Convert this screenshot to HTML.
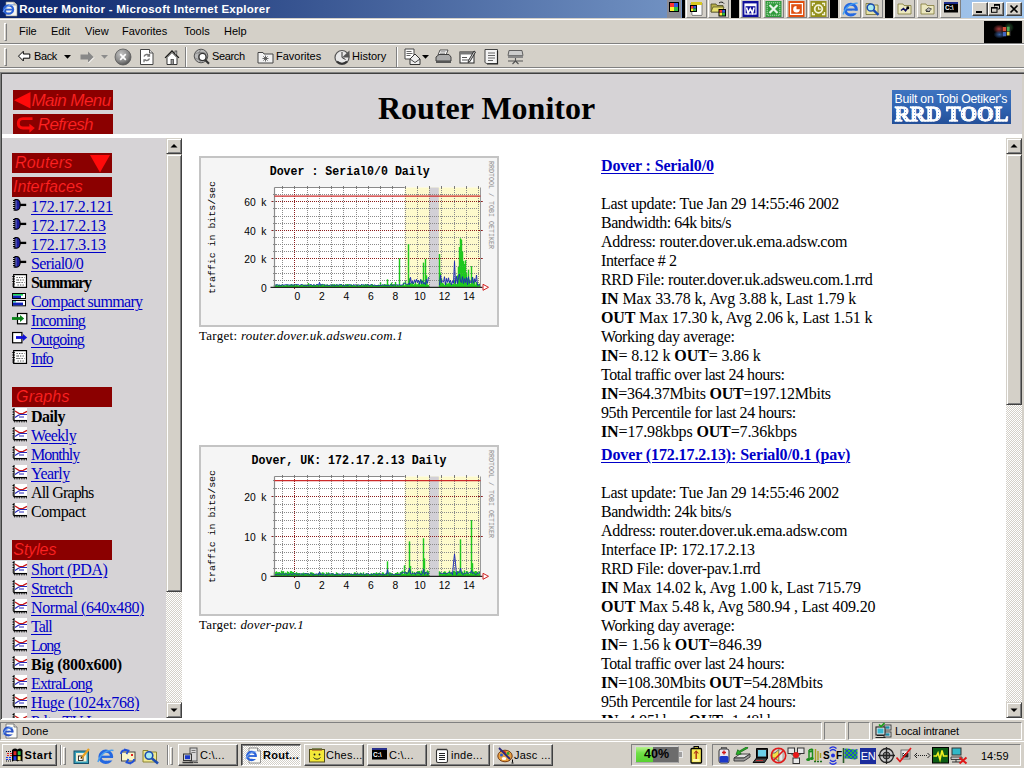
<!DOCTYPE html>
<html>
<head>
<meta charset="utf-8">
<title>Router Monitor</title>
<style>
*{box-sizing:border-box;margin:0;padding:0}
html,body{width:1024px;height:768px;overflow:hidden;background:#d4d0c8}
body{position:relative;font-family:"Liberation Sans",sans-serif;font-size:11px;color:#000}
.abs{position:absolute}
#title{left:0;top:0;width:1024px;height:19px;background:linear-gradient(90deg,#0a246a 0%,#a6caf0 100%)}
#title .t{left:20px;top:2.500px;color:#fff;font-weight:bold;font-size:11.5px;white-space:nowrap;letter-spacing:0px}
.ui{font-family:"Liberation Sans",sans-serif;font-size:11px;white-space:nowrap}
#menubar{left:0;top:19px;width:1024px;height:25px;background:#d4d0c8;border-top:1px solid #fff}
#toolbar{left:0;top:44px;width:1024px;height:26px;background:#d4d0c8;border-top:1px solid #fff}
.hline{height:1px;left:0;width:1024px}
#topframe{left:2px;top:74px;width:1020px;height:60px;background:#d6d3d6}
#leftframe{left:2px;top:138px;width:164px;height:580px;background:#d6d3d6;overflow:hidden}
#rightframe{left:184px;top:138px;width:821px;height:580px;background:#fff;overflow:hidden}
.serif{font-family:"Liberation Serif",serif}
.rb{background:#8b0000;color:#ff2222;-webkit-text-stroke:0.120px #8b0000;font-family:"Liberation Sans",sans-serif;font-style:italic;font-size:17px;white-space:nowrap;overflow:hidden}
a{color:#0000c8;text-decoration:underline;text-underline-offset:1.600px;text-decoration-thickness:1px}
#status{left:0;top:720px;width:1024px;height:22px;background:#d4d0c8}
#taskbar{left:0;top:742px;width:1024px;height:26px;background:#d4d0c8;border-top:1px solid #d4d0c8}

.osq i{position:absolute;width:4px;height:4px;display:block}
.ob{top:0;width:21px;height:18px;background:#d4d0c8;border-left:1px solid #fff;border-right:1px solid #808080;border-bottom:1px solid #808080;padding:1px 0 0 1px}
.ob svg{display:block}
.wb{top:2px;width:16px;height:14px;background:#d4d0c8;border:1px solid;border-color:#fff #404040 #404040 #fff;box-shadow:inset -1px -1px 0 #808080;padding:1px 0 0 1px}
.wb svg{display:block}
.grip{width:3px;border:1px solid;border-color:#fff #808080 #808080 #fff}
.vsep{width:2px;border-left:1px solid #808080;border-right:1px solid #fff}

.lr{left:10px;width:160px;height:19px;line-height:19px;font-size:16px;white-space:nowrap}
.sbtrack{background-color:#fff;background-image:linear-gradient(45deg,#d4d0c8 25%,transparent 25%,transparent 75%,#d4d0c8 75%),linear-gradient(45deg,#d4d0c8 25%,transparent 25%,transparent 75%,#d4d0c8 75%);background-size:2px 2px;background-position:0 0,1px 1px}
.sbbtn{background:#d4d0c8;border:1px solid;border-color:#d4d0c8 #404040 #404040 #d4d0c8;box-shadow:inset 1px 1px 0 #fff,inset -1px -1px 0 #808080;padding:1px}
.sbbtn svg{display:block}

.tl{left:417px;height:19px;line-height:19px;font-size:16px;white-space:nowrap}
.cap{left:15px;font-size:13px;line-height:15px;white-space:nowrap}

.sp{top:2px;height:18px;border:1px solid;border-color:#808080 #fff #fff #808080}
.tb{top:1px;height:22px;background:#d4d0c8;border:1px solid;border-color:#fff #404040 #404040 #fff;box-shadow:inset -1px -1px 0 #808080,inset 1px 1px 0 #d4d0c8}
.tbp{border-color:#404040 #fff #fff #404040;box-shadow:inset 1px 1px 0 #808080;background-color:#fff;background-image:linear-gradient(45deg,#d4d0c8 25%,transparent 25%,transparent 75%,#d4d0c8 75%),linear-gradient(45deg,#d4d0c8 25%,transparent 25%,transparent 75%,#d4d0c8 75%);background-size:2px 2px;background-position:0 0,1px 1px}
.tt{top:4px;letter-spacing:.250px}
.sunk{border:1px solid;border-color:#808080 #fff #fff #808080}
</style>
</head>
<body>
<!-- TITLE BAR -->
<div id="title" class="abs">
  <svg class="abs" style="left:2px;top:1px" width="16" height="16" viewBox="0 0 16 16"><path d="M4 1h8l3 3v11H4z" fill="#f4f4ee" stroke="#8a8a80" stroke-width=".6"/><path d="M12 1v3h3" fill="#d8d8d0" stroke="#8a8a80" stroke-width=".6"/><ellipse cx="6.5" cy="8.5" rx="4.6" ry="4.2" fill="none" stroke="#2a62d8" stroke-width="2.2"/><path d="M2.5 8.6h8" stroke="#2a62d8" stroke-width="1.8"/><path d="M1 11c3-6 8-8 11-7" stroke="#6fa0ee" stroke-width="1.1" fill="none"/></svg>
  <div class="abs t" id="ttl" style="/*fit*/letter-spacing:0.255px;margin-left:-0.70px;">Router Monitor - Microsoft Internet Explorer</div>
  <!-- office shortcut bar -->
  <div class="abs" style="left:667px;top:0;width:14px;height:18px;background:#8c8c94"></div>
  <div class="abs osq" style="left:669px;top:2px;background:#000;width:10px;height:10px"><i style="left:1px;top:1px;background:#f33"></i><i style="left:5px;top:1px;background:#35d"></i><i style="left:1px;top:5px;background:#fe3"></i><i style="left:5px;top:5px;background:#3b4"></i></div>
  <div class="abs" style="left:685px;top:0;width:276px;height:18px;background:#d4d0c8"></div>
  <div class="abs" style="left:682px;top:0;width:3px;height:18px;background:#000"></div>
  <div class="abs" style="left:731px;top:0;width:8px;height:18px;background:#000"></div>
  <div class="abs" style="left:830px;top:0;width:8px;height:18px;background:#000"></div>
  <div class="abs" style="left:885px;top:0;width:8px;height:18px;background:#000"></div>
  <div class="abs ob" style="left:686px"><svg width="17" height="16" viewBox="0 0 17 16"><path d="M3 2h11v12l-1 .8-1-.8-1 .8-1-.8-1 .8-1-.8-1 .8-1-.8-1 .8-1-.8z" fill="#fff" stroke="#555" stroke-width=".7"/><rect x="3" y="1" width="11" height="3" fill="#d8c820"/><rect x="2" y="4" width="7" height="7" fill="#000"/><rect x="3" y="5" width="2.5" height="2.5" fill="#f33"/><rect x="5.5" y="5" width="2.5" height="2.5" fill="#35d"/><rect x="3" y="7.5" width="2.5" height="2.5" fill="#fe3"/><rect x="5.5" y="7.5" width="2.5" height="2.5" fill="#3b4"/></svg></div>
  <div class="abs ob" style="left:708px"><svg width="17" height="16" viewBox="0 0 17 16"><path d="M1 3h5l1 1.5h6V11H1z" fill="#b8b048" stroke="#4a4820" stroke-width=".8"/><path d="M1 11l2-5h11l-2 5z" fill="#e8e070" stroke="#4a4820" stroke-width=".7"/><path d="M9 2c2-1.5 4-1 5 .6" stroke="#000" fill="none" stroke-width=".9"/><rect x="8.5" y="8" width="7.5" height="7.5" fill="#000"/><rect x="9.5" y="9" width="2.7" height="2.7" fill="#f33"/><rect x="12.3" y="9" width="2.7" height="2.7" fill="#35d"/><rect x="9.5" y="11.8" width="2.7" height="2.7" fill="#fe3"/><rect x="12.3" y="11.8" width="2.7" height="2.7" fill="#3b4"/></svg></div>
  <div class="abs ob" style="left:740px"><svg width="17" height="16" viewBox="0 0 17 16"><rect x="0.5" y="0" width="16" height="16" fill="#10109c"/><rect x="3" y="3" width="11" height="10" fill="none" stroke="#fff" stroke-width="1.2"/><rect x="3" y="3" width="11" height="2.2" fill="#fff"/><path d="M4.5 6.5l1.6 5.5 2.2-4.2 2.2 4.2 1.6-5.5" stroke="#fff" stroke-width="1.6" fill="none"/></svg></div>
  <div class="abs ob" style="left:763px"><svg width="17" height="16" viewBox="0 0 17 16"><rect x="0.5" y="0" width="16" height="16" fill="#2f9a3a"/><rect x="2.2" y="1.8" width="12.6" height="12.4" fill="none" stroke="#d8ecd8" stroke-width="1" stroke-dasharray="1 1"/><path d="M4.5 4l8 8M12.5 4l-8 8" stroke="#e8f4e8" stroke-width="2.2"/></svg></div>
  <div class="abs ob" style="left:786px"><svg width="17" height="16" viewBox="0 0 17 16"><rect x="0.5" y="0" width="16" height="16" fill="#e05010"/><rect x="2.6" y="2.6" width="11.8" height="10.8" fill="none" stroke="#fff" stroke-width="1.2"/><circle cx="8.5" cy="8.3" r="3.3" fill="#fff"/><path d="M8.5 8.3V4.6A3.7 3.7 0 0 1 12.2 8.3z" fill="#e05010"/></svg></div>
  <div class="abs ob" style="left:808px"><svg width="17" height="16" viewBox="0 0 17 16"><rect x="0.5" y="0" width="16" height="16" fill="#94901c"/><circle cx="8.5" cy="8" r="3.8" fill="none" stroke="#f4f4d8" stroke-width="1.8"/><path d="M8.5 5.6V8.2h2.4" stroke="#f4f4d8" stroke-width="1.2" fill="none"/><path d="M2.5 5V2.5H5M12 2.5h2.5V5M14.5 11v2.5H12M5 13.5H2.5V11" stroke="#f4f4d8" stroke-width="1.3" fill="none"/></svg></div>
  <div class="abs ob" style="left:840px"><svg width="17" height="16" viewBox="0 0 17 16"><ellipse cx="8.8" cy="8.6" rx="5.6" ry="5.4" fill="none" stroke="#2468e0" stroke-width="3"/><path d="M4 8.6h10" stroke="#2468e0" stroke-width="2.2"/><rect x="10" y="9.8" width="6" height="2.4" fill="#d4d0c8"/><path d="M1.2 13.5C3 6 10 1.5 15.5 2.2" stroke="#48a0f0" stroke-width="1.4" fill="none"/></svg></div>
  <div class="abs ob" style="left:862px"><svg width="17" height="16" viewBox="0 0 17 16"><path d="M2 2.5h5l1 1.5h6v9.5H2z" fill="#e8e4a8" stroke="#706c30" stroke-width=".8"/><circle cx="6.8" cy="6.5" r="3.6" fill="#a8ecf0" stroke="#1c4cb0" stroke-width="1.5"/><path d="M9.5 9.2l5 4.6" stroke="#1c4cb0" stroke-width="2.4"/></svg></div>
  <div class="abs ob" style="left:894px"><svg width="17" height="16" viewBox="0 0 17 16"><path d="M2 3h5l1 1.5h7V13H2z" fill="#ece8c0" stroke="#807838" stroke-width=".8"/><path d="M5 9.5l2.5-2 2 2.2 3-3.6" stroke="#101060" stroke-width="1.6" fill="none"/><rect x="10.5" y="5.5" width="2.6" height="2.6" fill="#000"/></svg></div>
  <div class="abs ob" style="left:917px"><svg width="17" height="16" viewBox="0 0 17 16"><path d="M2 3h5l1 1.5h7V13H2z" fill="#ece8c0" stroke="#807838" stroke-width=".8"/><path d="M6.5 9.2l3-2.4 3 1.2-2.6 2.6z" fill="#bbb" stroke="#333" stroke-width=".8"/><path d="M7 10.5h4" stroke="#333" stroke-width="1"/></svg></div>
  <div class="abs ob" style="left:940px"><svg width="17" height="16" viewBox="0 0 17 16"><rect x="2" y="1" width="14" height="10.5" fill="#000"/><rect x="2" y="1" width="14" height="2" fill="#1c2c8c"/><text x="3" y="9" font-family="Liberation Sans" font-size="6.5" font-weight="bold" fill="#fff">C:\</text></svg></div>
  <!-- window buttons -->
  <div class="abs wb" style="left:972px"><svg width="12" height="10" viewBox="0 0 12 10"><rect x="2" y="7" width="6" height="2" fill="#000"/></svg></div>
  <div class="abs wb" style="left:988px"><svg width="12" height="10" viewBox="0 0 12 10"><path d="M4.5 2.5V0.5h5v4.5H7.5" fill="none" stroke="#000" stroke-width="1"/><path d="M4 1h6" stroke="#000" stroke-width="1.6"/><rect x="1.5" y="3.5" width="5.5" height="4.8" fill="none" stroke="#000" stroke-width="1"/><path d="M1 3.8h6.5" stroke="#000" stroke-width="1.6"/></svg></div>
  <div class="abs wb" style="left:1006px"><svg width="12" height="10" viewBox="0 0 12 10"><path d="M2.5 1.5l7 7M9.5 1.5l-7 7" stroke="#000" stroke-width="1.7"/></svg></div>
</div>
<div class="abs hline" style="top:18px;background:#d4d0c8"></div>
<!-- MENU BAR -->
<div id="menubar" class="abs">
  <div class="abs grip" style="left:4px;top:3px;height:18px"></div>
  <div class="abs ui" style="left:19px;top:5px">File</div>
  <div class="abs ui" style="left:51px;top:5px">Edit</div>
  <div class="abs ui" style="left:85px;top:5px">View</div>
  <div class="abs ui" style="left:122px;top:5px">Favorites</div>
  <div class="abs ui" style="left:184px;top:5px">Tools</div>
  <div class="abs ui" style="left:224px;top:5px">Help</div>
  <div class="abs" style="left:984px;top:1px;width:38px;height:22px;background:#000">
    <svg width="38" height="22" viewBox="0 0 38 22"><defs><radialGradient id="wgr"><stop offset="0" stop-color="#e05050" stop-opacity=".75"/><stop offset="1" stop-color="#e05050" stop-opacity="0"/></radialGradient><radialGradient id="wgb"><stop offset="0" stop-color="#4878c8" stop-opacity=".8"/><stop offset="1" stop-color="#4878c8" stop-opacity="0"/></radialGradient><radialGradient id="wgg"><stop offset="0" stop-color="#3c9c4c" stop-opacity=".6"/><stop offset="1" stop-color="#3c9c4c" stop-opacity="0"/></radialGradient></defs><ellipse cx="15" cy="8" rx="6" ry="4.5" fill="url(#wgr)"/><ellipse cx="15.5" cy="13.5" rx="6" ry="4" fill="url(#wgb)"/><ellipse cx="25" cy="6.5" rx="5" ry="5" fill="url(#wgg)"/><rect x="18.8" y="6" width="3.4" height="4.3" fill="#d8503c"/><rect x="23" y="5.8" width="2.800" height="4.3" fill="#48a858"/><rect x="18.8" y="11" width="3.4" height="4.3" fill="#4468c0"/><rect x="22.8" y="10.7" width="2.9" height="3.8" fill="#e0d048"/><path d="M26.3 5v10" stroke="#222" stroke-width="1"/></svg>
  </div>
</div>
<div class="abs hline" style="top:43px;background:#808080"></div>
<!-- TOOLBAR -->
<div id="toolbar" class="abs">
  <div class="abs grip" style="left:4px;top:3px;height:18px"></div>
  <svg class="abs" style="left:17px;top:4px" width="16" height="16" viewBox="0 0 16 16"><path d="M6.300 2.300L1.500 7.100l4.800 4.800V9.200h6.500V5H6.300z" fill="#fff" stroke="#000" stroke-width="1" stroke-linejoin="miter"/></svg>
  <div class="abs ui" style="left:34px;top:5px;letter-spacing:-.400px">Back</div>
  <svg class="abs" style="left:64px;top:10px" width="7" height="4" viewBox="0 0 7 4"><path d="M0 0h7L3.500 3.800z" fill="#000"/></svg>
  <svg class="abs" style="left:79px;top:4px" width="16" height="16" viewBox="0 0 16 16"><path d="M9 2.500L14.500 8 9 13.500V10.500H1.500V5.500H9z" fill="#888" stroke="none"/><path d="M9.500 14L15 8.500" stroke="#fff" stroke-width="1"/></svg>
  <svg class="abs" style="left:101px;top:10px" width="7" height="4" viewBox="0 0 7 4"><path d="M0 0h7L3.500 3.800z" fill="#8c8c8c"/></svg>
  <svg class="abs" style="left:114px;top:3px" width="18" height="18" viewBox="0 0 18 18"><defs><radialGradient id="sg" cx=".38" cy=".32" r=".75"><stop offset="0" stop-color="#c4c4c4"/><stop offset=".6" stop-color="#8a8a8a"/><stop offset="1" stop-color="#484848"/></radialGradient></defs><circle cx="9" cy="9" r="8" fill="url(#sg)" stroke="#5a5a5a" stroke-width=".8"/><path d="M6.200 6.200l5.600 5.600M11.800 6.200l-5.600 5.600" stroke="#fff" stroke-width="1.700"/></svg>
  <svg class="abs" style="left:139px;top:3px" width="16" height="18" viewBox="0 0 16 18"><path d="M1.500 1.500h9l3.500 3.500v11.500h-12.500z" fill="#fff" stroke="#444" stroke-width="1"/><path d="M10.500 1.500v3.500h3.500" fill="#ddd" stroke="#444" stroke-width=".9"/><path d="M5 8.500c1-2.500 4-2.500 5-1M10.500 5.800v2.200h-2.200" stroke="#777" stroke-width="1.300" fill="none"/><path d="M10.500 10.500c-1 2.500-4 2.500-5 1M5 14.200v-2.200h2.200" stroke="#777" stroke-width="1.300" fill="none"/></svg>
  <svg class="abs" style="left:164px;top:3px" width="16" height="18" viewBox="0 0 16 18"><path d="M3 9.500v7h10v-7L8 4.500z" fill="#fff" stroke="#222" stroke-width=".9"/><path d="M1 9.800L8 2.800l7 7" fill="none" stroke="#111" stroke-width="1.100"/><rect x="7" y="11.500" width="2.600" height="5" fill="#999" stroke="#333" stroke-width=".7"/><rect x="11" y="3" width="1.800" height="3.500" fill="#ddd" stroke="#333" stroke-width=".7"/></svg>
  <div class="abs vsep" style="left:185px;top:2px;height:20px"></div>
  <svg class="abs" style="left:193px;top:3px" width="18" height="18" viewBox="0 0 18 18"><circle cx="8" cy="8" r="6.800" fill="#b8b8b8" stroke="#555" stroke-width="1"/><path d="M2 6c3-2 9-2 12 0M2 10c3 2 9 2 12 0M8 1.500c-3 3-3 10 0 13" stroke="#777" stroke-width=".8" fill="none"/><circle cx="9.500" cy="9" r="3.600" fill="#fff" stroke="#333" stroke-width="1.400"/><path d="M12 11.800l4 4" stroke="#333" stroke-width="2.200"/></svg>
  <div class="abs ui" style="left:212px;top:5px;letter-spacing:-.350px">Search</div>
  <svg class="abs" style="left:257px;top:5px" width="17" height="14" viewBox="0 0 17 14"><path d="M1 2.500h5l1 1.500h9v9h-15z" fill="#f2f2f2" stroke="#444" stroke-width="1"/><path d="M8.500 5.500v6M5.500 8.500h6M6.400 6.400l4.200 4.200M10.600 6.400l-4.200 4.200" stroke="#555" stroke-width=".9"/></svg>
  <div class="abs ui" style="left:276px;top:5px">Favorites</div>
  <svg class="abs" style="left:334px;top:3px" width="17" height="18" viewBox="0 0 17 18"><circle cx="8" cy="9.500" r="7" fill="#e8e8e8" stroke="#555" stroke-width="1.200"/><path d="M8 9.500V4M8 9.500l3.500 2" stroke="#333" stroke-width="1"/><path d="M8 9.500L15.500 2.500v7z" fill="#555"/><path d="M3 13.500a7 7 0 0 0 10 0" stroke="#333" stroke-width="1.800" fill="none"/></svg>
  <div class="abs ui" style="left:352px;top:5px">History</div>
  <div class="abs vsep" style="left:396px;top:2px;height:20px"></div>
  <svg class="abs" style="left:404px;top:3px" width="17" height="18" viewBox="0 0 17 18"><path d="M1 1h9v10H1z" fill="#fff" stroke="#444" stroke-width="1"/><path d="M2.500 3.500h5M2.500 5.500h6M2.500 7.500h4" stroke="#666" stroke-width="1"/><path d="M6 11l5-5 5 5v5.500H6z" fill="#eee" stroke="#333" stroke-width="1"/><path d="M6 11l5 3.500 5-3.500" fill="none" stroke="#333" stroke-width=".9"/></svg>
  <svg class="abs" style="left:422px;top:10px" width="7" height="4" viewBox="0 0 7 4"><path d="M0 0h7L3.500 3.800z" fill="#000"/></svg>
  <svg class="abs" style="left:435px;top:4px" width="17" height="16" viewBox="0 0 17 16"><path d="M5 1h8l-2 5H3z" fill="#fff" stroke="#444" stroke-width=".9"/><path d="M1 8l3-2.500h10l2 2.500v4H1z" fill="#aaa" stroke="#333" stroke-width=".9"/><path d="M1 12h15v2H1z" fill="#555"/><path d="M5.500 2.800h5M5 4.300h5" stroke="#777" stroke-width=".8"/></svg>
  <svg class="abs" style="left:459px;top:4px" width="17" height="16" viewBox="0 0 17 16"><rect x="1" y="3" width="14" height="11" fill="#fff" stroke="#333" stroke-width="1.100"/><rect x="1" y="3" width="14" height="2.500" fill="#777"/><path d="M3 8.500h5M3 11h7" stroke="#555" stroke-width="1.100"/><path d="M9.500 11.500l5.500-9.500 1.500 1-5.500 9.500-2 1z" fill="#ccc" stroke="#222" stroke-width=".9"/></svg>
  <svg class="abs" style="left:483px;top:3px" width="16" height="18" viewBox="0 0 16 18"><path d="M2 1.500h12.500v14H4.500c-2 0-3-1-2.500-2.500z" fill="#f4f4f4" stroke="#444" stroke-width="1"/><path d="M5 5h7M5 7.500h7M5 10h7M5 12.500h5" stroke="#666" stroke-width="1.100"/><path d="M14.500 3v13H4" stroke="#222" stroke-width="1.200" fill="none"/></svg>
  <svg class="abs" style="left:507px;top:4px" width="17" height="16" viewBox="0 0 17 16"><path d="M2 1.500h13l1 5H1z" fill="#ccc" stroke="#555" stroke-width=".9"/><path d="M1 6.500h15v2.500H1z" fill="#888"/><path d="M8.500 9v3M1 12h15M8.500 12l-3 3M8.500 12l3 3" stroke="#555" stroke-width="1.100" fill="none"/></svg>
</div>
<div class="abs hline" style="top:67px;background:#808080"></div>
<div class="abs hline" style="top:68px;background:#fff"></div>
<div class="abs hline" style="top:72px;background:#808080"></div>
<div class="abs hline" style="top:73px;background:#404040"></div>
<div class="abs" style="left:0px;top:72px;width:1px;height:648px;background:#808080"></div>
<div class="abs" style="left:1px;top:73px;width:1px;height:646px;background:#404040"></div>
<div class="abs" style="left:2px;top:74px;width:1020px;height:645px;background:#fff"></div>
<!-- FRAMES -->
<svg width="0" height="0" style="position:absolute"><defs>
<g id="plug"><path d="M3 1.500h1.300c2.700 0 3.900 2.300 3.900 5.400s-1.200 5.400-3.900 5.400H3z" fill="#1c1c9c" stroke="#000" stroke-width="1.100"/><path d="M4 2.500v8.800" stroke="#8c94d0" stroke-width=".8"/><path d="M8 6.900h6.200" stroke="#000" stroke-width="2.300"/><path d="M1 2.500h2M1 4.500h2M1 6.500h2M1 8.500h2M1 10.500h2M1.500 12h1.500" stroke="#000" stroke-width="1"/></g>
<g id="note"><rect x="1.700" y="0.600" width="12.800" height="12.800" fill="#fff" stroke="#000" stroke-width="1.200"/><path d="M0.300 2.500h2.500M0.300 5h2.500M0.300 7.500h2.500M0.300 10h2.500M0.300 12h2" stroke="#000" stroke-width="1"/><path d="M4.500 3.500h8M5.500 6h7M4.500 8.500h8M5.500 11h7" stroke="#555" stroke-width="1" stroke-dasharray="1.300 1.200"/><path d="M4 6h3M4 8.500h4" stroke="#777" stroke-width=".9"/></g>
<g id="bars"><rect x="0.500" y="0.500" width="13" height="5" fill="#fff" stroke="#000" stroke-width="1"/><rect x="1" y="1" width="10" height="1.600" fill="#18d858"/><rect x="1" y="2.600" width="8" height="2.400" fill="#1020b8"/><rect x="0.500" y="7.500" width="13" height="5.300" fill="#fff" stroke="#000" stroke-width="1"/><rect x="1" y="8" width="3" height="1.600" fill="#48c8a0"/><rect x="1" y="9.600" width="10" height="2.700" fill="#1020b8"/></g>
<g id="inc"><rect x="5.500" y="1.500" width="9.300" height="10.300" fill="#fff" stroke="#000" stroke-width="1.200"/><path d="M0 6.500h8.500" stroke="#088018" stroke-width="2.800"/><path d="M8 3l4.200 3.500L8 10z" fill="#088018"/></g>
<g id="outg"><rect x="0.600" y="1.500" width="9.300" height="10.300" fill="#fff" stroke="#000" stroke-width="1.200"/><path d="M4 6.500h7.500" stroke="#1010d8" stroke-width="2.800"/><path d="M11 3l4.200 3.500L11 10z" fill="#1010d8"/></g>
<g id="gr"><rect x="1" y="0" width="14" height="13" fill="#fff"/><path d="M2 0v13" stroke="#000" stroke-width="1.200"/><path d="M1.500 12.600h13.500" stroke="#000" stroke-width="1.300"/><path d="M2 13.800h13" stroke="#000" stroke-width="1" stroke-dasharray="1.200 1.200"/><path d="M0.500 1.500h1.500M0.500 4h1.500M0.500 6.500h1.500M0.500 9h1.500M0.500 11h1.500" stroke="#000" stroke-width="1"/><path d="M3 3l4.200 2.600 4-.3L15 3.400" stroke="#c81818" stroke-width="1.300" fill="none"/><path d="M3 9.500l3-2 2.200-1H15" stroke="#2828b8" stroke-width="1.200" fill="none"/><path d="M7 9h5" stroke="#2828b8" stroke-width="1" fill="none"/></g>
</defs></svg>
<div id="topframe" class="abs">
  <div class="abs rb" style="left:11px;top:16px;width:100px;height:20px"><svg class="abs" style="left:1px;top:1.500px" width="17" height="17" viewBox="0 0 17 17"><path d="M16.500 0v16.500L0 8.200z" fill="#ff0a0a"/></svg><span id="mm" class="abs" style="left:19px;top:0.700px;line-height:20px;/*fit*/letter-spacing:-0.550px;margin-left:-0.50px;">Main Menu</span></div>
  <div class="abs rb" style="left:11px;top:40px;width:100px;height:20px"><svg class="abs" style="left:3px;top:2px" width="20" height="18" viewBox="0 0 20 18"><path d="M16.500 2.600H7C3.500 2.600 2.300 4.600 2.300 7.300S3.500 12 7 12H14" fill="none" stroke="#fa0c0c" stroke-width="2.900"/><path d="M13.400 7.700l5.400 4.400-5.400 4.600z" fill="#fa0c0c"/></svg><span id="rf" class="abs" style="left:26px;top:0.700px;line-height:20px;/*fit*/letter-spacing:-0.633px;margin-left:-1.20px;">Refresh</span></div>
  <div class="abs serif" style="left:376px;top:13.500px;font-size:32px;font-weight:bold;white-space:nowrap;line-height:40px;/*fit*/letter-spacing:0.000px;margin-left:0.00px;" id="h1t">Router Monitor</div>
  <div class="abs" style="left:890px;top:16px;width:119px;height:34px;background:linear-gradient(180deg,#3f74c0 0%,#2e62b0 55%,#244f98 100%);overflow:hidden">
    <div class="abs" style="left:2.500px;top:2.200px;color:#fff;font-size:12.300px;letter-spacing:-0.250px;white-space:nowrap;line-height:15px" id="rrd1">Built on Tobi Oetiker's</div>
    <div class="abs serif" style="left:2.500px;top:12px;color:transparent;background:radial-gradient(circle at 1.500px 1.500px,#6c94d0 0.550px,#fff 0.800px) 0 0/3px 3px;-webkit-background-clip:text;background-clip:text;-webkit-text-stroke:0.800px #fff;font-size:21.600px;font-weight:bold;white-space:nowrap;line-height:24px" id="rrd2">RRD TOOL</div>
  </div>
</div>
<div id="leftframe" class="abs serif">
<!--LF-->
<div class="abs rb" style="left:10px;top:15px;width:100px;height:20px"><span id="h0" class="abs" style="left:3px;top:0px;font-size:16px;line-height:20px;letter-spacing:0.200px;">Routers</span><svg class="abs" style="left:78px;top:2px" width="20" height="18" viewBox="0 0 20 18"><path d="M0 0h20L10 17.500z" fill="#ff0a0a"/></svg></div>
<div class="abs rb" style="left:10px;top:39px;width:100px;height:20px"><span id="h1" class="abs" style="left:1px;top:0px;font-size:16px;line-height:20px;letter-spacing:-0.056px;">Interfaces</span></div>
<div class="abs lr" style="top:59px"><svg class="abs" style="left:0;top:1px" width="16" height="16" viewBox="0 0 16 16"><use href="#plug"/></svg><span id="l0" class="abs" style="left:19px;top:0;letter-spacing:-0.182px;"><a>172.17.2.121</a></span></div>
<div class="abs lr" style="top:78px"><svg class="abs" style="left:0;top:1px" width="16" height="16" viewBox="0 0 16 16"><use href="#plug"/></svg><span id="l1" class="abs" style="left:19px;top:0;letter-spacing:-0.100px;"><a>172.17.2.13</a></span></div>
<div class="abs lr" style="top:97px"><svg class="abs" style="left:0;top:1px" width="16" height="16" viewBox="0 0 16 16"><use href="#plug"/></svg><span id="l2" class="abs" style="left:19px;top:0;letter-spacing:-0.100px;"><a>172.17.3.13</a></span></div>
<div class="abs lr" style="top:116px"><svg class="abs" style="left:0;top:1px" width="16" height="16" viewBox="0 0 16 16"><use href="#plug"/></svg><span id="l3" class="abs" style="left:19px;top:0;letter-spacing:-0.625px;"><a>Serial0/0</a></span></div>
<div class="abs lr" style="top:135px"><svg class="abs" style="left:0;top:1px" width="16" height="16" viewBox="0 0 16 16"><use href="#note"/></svg><span id="l4" class="abs" style="left:19px;top:0;letter-spacing:-1.083px;"><b>Summary</b></span></div>
<div class="abs lr" style="top:154px"><svg class="abs" style="left:0;top:1px" width="16" height="16" viewBox="0 0 16 16"><use href="#bars"/></svg><span id="l5" class="abs" style="left:19px;top:0;letter-spacing:-0.657px;"><a>Compact summary</a></span></div>
<div class="abs lr" style="top:173px"><svg class="abs" style="left:0;top:1px" width="16" height="16" viewBox="0 0 16 16"><use href="#inc"/></svg><span id="l6" class="abs" style="left:19px;top:0;letter-spacing:-0.943px;"><a>Incoming</a></span></div>
<div class="abs lr" style="top:192px"><svg class="abs" style="left:0;top:1px" width="16" height="16" viewBox="0 0 16 16"><use href="#outg"/></svg><span id="l7" class="abs" style="left:19px;top:0;letter-spacing:-0.943px;"><a>Outgoing</a></span></div>
<div class="abs lr" style="top:211px"><svg class="abs" style="left:0;top:1px" width="16" height="16" viewBox="0 0 16 16"><use href="#note"/></svg><span id="l8" class="abs" style="left:19px;top:0;letter-spacing:-1.333px;"><a>Info</a></span></div>
<div class="abs rb" style="left:10px;top:249px;width:100px;height:20px"><span id="h2" class="abs" style="left:4px;top:0px;font-size:16px;line-height:20px;letter-spacing:0.200px;">Graphs</span></div>
<div class="abs lr" style="top:269px"><svg class="abs" style="left:0;top:1px" width="16" height="16" viewBox="0 0 16 16"><use href="#gr"/></svg><span id="l9" class="abs" style="left:19px;top:0;letter-spacing:-0.475px;"><b>Daily</b></span></div>
<div class="abs lr" style="top:288px"><svg class="abs" style="left:0;top:1px" width="16" height="16" viewBox="0 0 16 16"><use href="#gr"/></svg><span id="l10" class="abs" style="left:19px;top:0;letter-spacing:-0.560px;"><a>Weekly</a></span></div>
<div class="abs lr" style="top:307px"><svg class="abs" style="left:0;top:1px" width="16" height="16" viewBox="0 0 16 16"><use href="#gr"/></svg><span id="l11" class="abs" style="left:19px;top:0;letter-spacing:-0.967px;"><a>Monthly</a></span></div>
<div class="abs lr" style="top:326px"><svg class="abs" style="left:0;top:1px" width="16" height="16" viewBox="0 0 16 16"><use href="#gr"/></svg><span id="l12" class="abs" style="left:19px;top:0;letter-spacing:-0.560px;"><a>Yearly</a></span></div>
<div class="abs lr" style="top:345px"><svg class="abs" style="left:0;top:1px" width="16" height="16" viewBox="0 0 16 16"><use href="#gr"/></svg><span id="l13" class="abs" style="left:19px;top:0;letter-spacing:-0.822px;">All Graphs</span></div>
<div class="abs lr" style="top:364px"><svg class="abs" style="left:0;top:1px" width="16" height="16" viewBox="0 0 16 16"><use href="#gr"/></svg><span id="l14" class="abs" style="left:19px;top:0;letter-spacing:-0.450px;">Compact</span></div>
<div class="abs rb" style="left:10px;top:402px;width:100px;height:20px"><span id="h3" class="abs" style="left:2px;top:0px;font-size:16px;line-height:20px;letter-spacing:-0.100px;margin-left:-0.70px;">Styles</span></div>
<div class="abs lr" style="top:422px"><svg class="abs" style="left:0;top:1px" width="16" height="16" viewBox="0 0 16 16"><use href="#gr"/></svg><span id="l15" class="abs" style="left:19px;top:0;letter-spacing:-0.450px;"><a>Short (PDA)</a></span></div>
<div class="abs lr" style="top:441px"><svg class="abs" style="left:0;top:1px" width="16" height="16" viewBox="0 0 16 16"><use href="#gr"/></svg><span id="l16" class="abs" style="left:19px;top:0;letter-spacing:-0.568px;"><a>Stretch</a></span></div>
<div class="abs lr" style="top:460px"><svg class="abs" style="left:0;top:1px" width="16" height="16" viewBox="0 0 16 16"><use href="#gr"/></svg><span id="l17" class="abs" style="left:19px;top:0;letter-spacing:-0.407px;"><a>Normal (640x480)</a></span></div>
<div class="abs lr" style="top:479px"><svg class="abs" style="left:0;top:1px" width="16" height="16" viewBox="0 0 16 16"><use href="#gr"/></svg><span id="l18" class="abs" style="left:19px;top:0;letter-spacing:-1.000px;"><a>Tall</a></span></div>
<div class="abs lr" style="top:498px"><svg class="abs" style="left:0;top:1px" width="16" height="16" viewBox="0 0 16 16"><use href="#gr"/></svg><span id="l19" class="abs" style="left:19px;top:0;letter-spacing:-1.267px;"><a>Long</a></span></div>
<div class="abs lr" style="top:517px"><svg class="abs" style="left:0;top:1px" width="16" height="16" viewBox="0 0 16 16"><use href="#gr"/></svg><span id="l20" class="abs" style="left:19px;top:0;letter-spacing:-0.225px;"><b>Big (800x600)</b></span></div>
<div class="abs lr" style="top:536px"><svg class="abs" style="left:0;top:1px" width="16" height="16" viewBox="0 0 16 16"><use href="#gr"/></svg><span id="l21" class="abs" style="left:19px;top:0;letter-spacing:-0.838px;"><a>ExtraLong</a></span></div>
<div class="abs lr" style="top:555px"><svg class="abs" style="left:0;top:1px" width="16" height="16" viewBox="0 0 16 16"><use href="#gr"/></svg><span id="l22" class="abs" style="left:19px;top:0;letter-spacing:-0.342px;"><a>Huge (1024x768)</a></span></div>
<div class="abs lr" style="top:574px"><svg class="abs" style="left:0;top:1px" width="16" height="16" viewBox="0 0 16 16"><use href="#gr"/></svg><span id="l23" class="abs" style="left:19px;top:0;letter-spacing:-0.342px;"><a>Pdtv TV L</a></span></div>
<!--/LF-->
</div>
<!-- left scrollbar -->
<div class="abs sbtrack" style="left:166px;top:138px;width:16px;height:580px"></div>
<div class="abs sbbtn" style="left:166px;top:138px;width:16px;height:16px"><svg width="12" height="12" viewBox="0 0 12 12"><path d="M2.500 7.500h7L6 4z" fill="#000"/></svg></div>
<div class="abs sbbtn" style="left:166px;top:154px;width:16px;height:438px"></div>
<div class="abs sbbtn" style="left:166px;top:702px;width:16px;height:16px"><svg width="12" height="12" viewBox="0 0 12 12"><path d="M2.500 4.500h7L6 8z" fill="#000"/></svg></div>
<div id="rightframe" class="abs serif">
<!--RF-->
<div class="abs" style="left:15px;top:18px;width:300px;height:171px"><svg width="300" height="171" viewBox="0 0 300 171" style="display:block">
<rect x="0" y="0" width="300" height="171" fill="#c4c4c4"/>
<rect x="2" y="2" width="296" height="167" fill="#f5f5f5"/>
<rect x="75.5" y="31.5" width="206.0" height="99.5" fill="#fff"/>
<rect x="205.7" y="31.5" width="75.8" height="99.5" fill="#fdfacc"/>
<rect x="230.2" y="31.5" width="9.6" height="99.5" fill="#d2d0d6"/>
<path d="M75.5 131.0V129.1M76.5 131.0V129.4M77.5 131.0V128.6M78.5 131.0V129.5M79.5 131.0V128.8M80.5 131.0V129.0M81.5 131.0V129.5M82.5 131.0V128.8M83.5 131.0V129.5M84.5 131.0V128.9M85.5 131.0V129.5M86.5 131.0V129.4M87.5 131.0V129.0M88.5 131.0V128.4M89.5 131.0V129.4M90.5 131.0V129.3M91.5 131.0V128.7M92.5 131.0V128.2M93.5 131.0V128.7M94.5 131.0V129.0M95.5 131.0V128.2M96.5 131.0V129.5M97.5 131.0V128.3M98.5 131.0V129.2M99.5 131.0V129.4M100.5 131.0V129.4M101.5 131.0V129.1M102.5 131.0V128.4M103.5 131.0V129.3M104.5 131.0V128.7M105.5 131.0V128.7M106.5 131.0V129.0M107.5 131.0V128.8M108.5 131.0V129.5M109.5 131.0V127.3M110.5 131.0V129.3M111.5 131.0V128.6M112.5 131.0V129.0M113.5 131.0V129.1M114.5 131.0V128.7M115.5 131.0V128.9M116.5 131.0V129.1M117.5 131.0V128.4M118.5 131.0V128.6M119.5 131.0V129.2M120.5 131.0V128.7M121.5 131.0V128.8M122.5 131.0V128.3M123.5 131.0V128.5M124.5 131.0V129.2M125.5 131.0V128.2M126.5 131.0V129.4M127.5 131.0V129.0M128.5 131.0V128.5M129.5 131.0V129.4M130.5 131.0V128.9M131.5 131.0V129.5M132.5 131.0V128.6M133.5 131.0V128.5M134.5 131.0V128.8M135.5 131.0V128.3M136.5 131.0V129.1M137.5 131.0V128.6M138.5 131.0V128.7M139.5 131.0V128.7M140.5 131.0V128.9M141.5 131.0V128.4M142.5 131.0V128.2M143.5 131.0V128.9M144.5 131.0V128.6M145.5 131.0V129.5M146.5 131.0V128.6M147.5 131.0V128.6M148.5 131.0V128.1M149.5 131.0V128.4M150.5 131.0V129.2M151.5 131.0V129.0M152.5 131.0V128.6M153.5 131.0V129.5M154.5 131.0V128.9M155.5 131.0V129.3M156.5 131.0V129.4M157.5 131.0V129.5M158.5 131.0V128.5M159.5 131.0V129.4M160.5 131.0V129.2M161.5 131.0V129.0M162.5 131.0V128.3M163.5 131.0V129.5M164.5 131.0V128.9M165.5 131.0V128.8M166.5 131.0V128.3M167.5 131.0V128.4M168.5 131.0V128.3M169.5 131.0V129.2M170.5 131.0V129.0M171.5 131.0V129.1M172.5 131.0V128.3M173.5 131.0V128.2M174.5 131.0V129.4M175.5 131.0V129.3M176.5 131.0V129.2M177.5 131.0V129.2M178.5 131.0V128.9M179.5 131.0V128.7M180.5 131.0V129.2M181.5 131.0V126.4M182.5 131.0V129.0M183.5 131.0V129.0M184.5 131.0V128.8M185.5 131.0V128.2M186.5 131.0V128.6M187.5 131.0V128.8M188.5 131.0V123.6M189.5 131.0V128.6M190.5 131.0V129.5M191.5 131.0V128.3M192.5 131.0V126.7M193.5 131.0V128.3M194.5 131.0V128.4M195.5 131.0V129.0M196.5 131.0V126.0M197.5 131.0V129.4M198.5 131.0V128.7M199.5 131.0V129.5M200.5 131.0V102.4M201.5 131.0V129.3M202.5 131.0V129.3M203.5 131.0V129.1M204.5 131.0V126.7M205.5 131.0V129.4M206.5 131.0V125.3M207.5 131.0V128.4M208.5 131.0V128.5M209.5 131.0V88.1M210.5 131.0V122.4M211.5 131.0V127.1M212.5 131.0V128.3M213.5 131.0V126.0M214.5 131.0V128.7M215.5 131.0V128.2M216.5 131.0V125.3M217.5 131.0V128.6M218.5 131.0V128.8M219.5 131.0V127.6M220.5 131.0V125.3M221.5 131.0V128.7M222.5 131.0V123.8M223.5 131.0V127.8M224.5 131.0V106.7M225.5 131.0V127.1M226.5 131.0V103.1M227.5 131.0V119.6M228.5 131.0V128.6M229.5 131.0V129.0M240.5 131.0V98.1M241.5 131.0V116.7M242.5 131.0V122.4M243.5 131.0V127.0M244.5 131.0V127.7M245.5 131.0V129.0M246.5 131.0V126.0M247.5 131.0V127.5M248.5 131.0V127.8M249.5 131.0V127.6M250.5 131.0V125.3M251.5 131.0V127.3M252.5 131.0V127.9M253.5 131.0V128.3M254.5 131.0V128.1M255.5 131.0V123.8M256.5 131.0V127.8M257.5 131.0V128.3M258.5 131.0V119.6M259.5 131.0V111.0M260.5 131.0V91.0M261.5 131.0V82.4M262.5 131.0V83.8M263.5 131.0V95.2M264.5 131.0V105.3M265.5 131.0V108.1M266.5 131.0V104.5M267.5 131.0V116.7M268.5 131.0V122.4M269.5 131.0V113.8M270.5 131.0V123.8M271.5 131.0V128.2M272.5 131.0V110.3M273.5 131.0V121.0M274.5 131.0V127.8M275.5 131.0V123.8M276.5 131.0V128.8M277.5 131.0V126.0M278.5 131.0V128.5M279.5 131.0V128.7M280.5 131.0V127.8" stroke="#1ec81e" stroke-width="1.25" fill="none"/>
<path d="M77.0 124.5H281.5M77.0 117.5H281.5M77.0 110.5H281.5M77.0 95.5H281.5M77.0 88.5H281.5M77.0 81.5H281.5M77.0 67.5H281.5M77.0 60.5H281.5M77.0 52.5H281.5M77.0 38.5H281.5" stroke="#8a8a8a" stroke-width="1" stroke-dasharray="1 1" fill="none"/>
<path d="M83.5 32.0V131.0M108.5 32.0V131.0M120.5 32.0V131.0M132.5 32.0V131.0M144.5 32.0V131.0M157.5 32.0V131.0M169.5 32.0V131.0M181.5 32.0V131.0M193.5 32.0V131.0M206.5 32.0V131.0M218.5 32.0V131.0M230.5 32.0V131.0M242.5 32.0V131.0M255.5 32.0V131.0M267.5 32.0V131.0M279.5 32.0V131.0" stroke="#8a8a8a" stroke-width="1" stroke-dasharray="1 1" fill="none"/>
<path d="M77.0 102.5H283.5M77.0 74.5H283.5M77.0 45.5H283.5" stroke="#8c1c1c" stroke-width="1" stroke-dasharray="1 1" fill="none"/>
<path d="M72.5 102.5h4M279.5 102.5h4M72.5 74.5h4M279.5 74.5h4M72.5 45.5h4M279.5 45.5h4" stroke="#8c1c1c" stroke-width="1" fill="none"/>
<path d="M95.5 30.0V134.0" stroke="#8c1c1c" stroke-width="1" stroke-dasharray="1 1"/>
<path d="M75.5 131.0V129.1M76.5 131.0V129.4M77.5 131.0V128.6M78.5 131.0V129.5M79.5 131.0V128.8M80.5 131.0V129.0M81.5 131.0V129.5M82.5 131.0V128.8M83.5 131.0V129.5M84.5 131.0V128.9M85.5 131.0V129.5M86.5 131.0V129.4M87.5 131.0V129.0M88.5 131.0V128.4M89.5 131.0V129.4M90.5 131.0V129.3M91.5 131.0V128.7M92.5 131.0V128.2M93.5 131.0V128.7M94.5 131.0V129.0M95.5 131.0V128.2M96.5 131.0V129.5M97.5 131.0V128.3M98.5 131.0V129.2M99.5 131.0V129.4M100.5 131.0V129.4M101.5 131.0V129.1M102.5 131.0V128.4M103.5 131.0V129.3M104.5 131.0V128.7M105.5 131.0V128.7M106.5 131.0V129.0M107.5 131.0V128.8M108.5 131.0V129.5M109.5 131.0V127.3M110.5 131.0V129.3M111.5 131.0V128.6M112.5 131.0V129.0M113.5 131.0V129.1M114.5 131.0V128.7M115.5 131.0V128.9M116.5 131.0V129.1M117.5 131.0V128.4M118.5 131.0V128.6M119.5 131.0V129.2M120.5 131.0V128.7M121.5 131.0V128.8M122.5 131.0V128.3M123.5 131.0V128.5M124.5 131.0V129.2M125.5 131.0V128.2M126.5 131.0V129.4M127.5 131.0V129.0M128.5 131.0V128.5M129.5 131.0V129.4M130.5 131.0V128.9M131.5 131.0V129.5M132.5 131.0V128.6M133.5 131.0V128.5M134.5 131.0V128.8M135.5 131.0V128.3M136.5 131.0V129.1M137.5 131.0V128.6M138.5 131.0V128.7M139.5 131.0V128.7M140.5 131.0V128.9M141.5 131.0V128.4M142.5 131.0V128.2M143.5 131.0V128.9M144.5 131.0V128.6M145.5 131.0V129.5M146.5 131.0V128.6M147.5 131.0V128.6M148.5 131.0V128.1M149.5 131.0V128.4M150.5 131.0V129.2M151.5 131.0V129.0M152.5 131.0V128.6M153.5 131.0V129.5M154.5 131.0V128.9M155.5 131.0V129.3M156.5 131.0V129.4M157.5 131.0V129.5M158.5 131.0V128.5M159.5 131.0V129.4M160.5 131.0V129.2M161.5 131.0V129.0M162.5 131.0V128.3M163.5 131.0V129.5M164.5 131.0V128.9M165.5 131.0V128.8M166.5 131.0V128.3M167.5 131.0V128.4M168.5 131.0V128.3M169.5 131.0V129.2M170.5 131.0V129.0M171.5 131.0V129.1M172.5 131.0V128.3M173.5 131.0V128.2M174.5 131.0V129.4M175.5 131.0V129.3M176.5 131.0V129.2M177.5 131.0V129.2M178.5 131.0V128.9M179.5 131.0V128.7M180.5 131.0V129.2M181.5 131.0V126.4M182.5 131.0V129.0M183.5 131.0V129.0M184.5 131.0V128.8M185.5 131.0V128.2M186.5 131.0V128.6M187.5 131.0V128.8M188.5 131.0V123.6M189.5 131.0V128.6M190.5 131.0V129.5M191.5 131.0V128.3M192.5 131.0V126.7M193.5 131.0V128.3M194.5 131.0V128.4M195.5 131.0V129.0M196.5 131.0V126.0M197.5 131.0V129.4M198.5 131.0V128.7M199.5 131.0V129.5M200.5 131.0V102.4M201.5 131.0V129.3M202.5 131.0V129.3M203.5 131.0V129.1M204.5 131.0V126.7M205.5 131.0V129.4M206.5 131.0V125.3M207.5 131.0V128.4M208.5 131.0V128.5M209.5 131.0V88.1M210.5 131.0V122.4M211.5 131.0V127.1M212.5 131.0V128.3M213.5 131.0V126.0M214.5 131.0V128.7M215.5 131.0V128.2M216.5 131.0V125.3M217.5 131.0V128.6M218.5 131.0V128.8M219.5 131.0V127.6M220.5 131.0V125.3M221.5 131.0V128.7M222.5 131.0V123.8M223.5 131.0V127.8M224.5 131.0V106.7M225.5 131.0V127.1M226.5 131.0V103.1M227.5 131.0V119.6M228.5 131.0V128.6M229.5 131.0V129.0M240.5 131.0V98.1M241.5 131.0V116.7M242.5 131.0V122.4M243.5 131.0V127.0M244.5 131.0V127.7M245.5 131.0V129.0M246.5 131.0V126.0M247.5 131.0V127.5M248.5 131.0V127.8M249.5 131.0V127.6M250.5 131.0V125.3M251.5 131.0V127.3M252.5 131.0V127.9M253.5 131.0V128.3M254.5 131.0V128.1M255.5 131.0V123.8M256.5 131.0V127.8M257.5 131.0V128.3M258.5 131.0V119.6M259.5 131.0V111.0M260.5 131.0V91.0M261.5 131.0V82.4M262.5 131.0V83.8M263.5 131.0V95.2M264.5 131.0V105.3M265.5 131.0V108.1M266.5 131.0V104.5M267.5 131.0V116.7M268.5 131.0V122.4M269.5 131.0V113.8M270.5 131.0V123.8M271.5 131.0V128.2M272.5 131.0V110.3M273.5 131.0V121.0M274.5 131.0V127.8M275.5 131.0V123.8M276.5 131.0V128.8M277.5 131.0V126.0M278.5 131.0V128.5M279.5 131.0V128.7M280.5 131.0V127.8" stroke="#1ec81e" stroke-width="1.25" fill="none" opacity=".8"/>
<path d="M75.5 129.3L76.5 129.0L77.5 129.0L78.5 128.7L79.5 129.6L80.5 129.0L81.5 129.4L82.5 129.4L83.5 128.7L84.5 129.1L85.5 129.0L86.5 128.7L87.5 128.5L88.5 129.1L89.5 128.9L90.5 129.1L91.5 129.1L92.5 128.8L93.5 129.1L94.5 129.0L95.5 129.1L96.5 128.5L97.5 128.8L98.5 128.6L99.5 128.5L100.5 129.4L101.5 129.0L102.5 128.5L103.5 128.6L104.5 129.5L105.5 129.6L106.5 129.1L107.5 129.6L108.5 129.4L109.5 129.6L110.5 128.9L111.5 128.7L112.5 128.6L113.5 129.5L114.5 128.8L115.5 128.9L116.5 129.5L117.5 128.6L118.5 128.5L119.5 129.4L120.5 126.4L121.5 129.2L122.5 129.1L123.5 128.4L124.5 128.6L125.5 129.5L126.5 129.2L127.5 129.0L128.5 129.3L129.5 129.5L130.5 129.3L131.5 128.8L132.5 129.7L133.5 129.0L134.5 129.1L135.5 129.7L136.5 129.3L137.5 128.9L138.5 129.1L139.5 129.6L140.5 128.4L141.5 128.7L142.5 128.5L143.5 129.6L144.5 129.4L145.5 129.7L146.5 128.7L147.5 129.4L148.5 129.5L149.5 129.2L150.5 128.5L151.5 128.7L152.5 129.4L153.5 129.5L154.5 128.5L155.5 129.0L156.5 128.8L157.5 129.6L158.5 129.6L159.5 128.8L160.5 129.2L161.5 129.6L162.5 128.5L163.5 128.9L164.5 128.7L165.5 129.6L166.5 128.6L167.5 129.6L168.5 128.6L169.5 129.1L170.5 129.3L171.5 129.0L172.5 128.5L173.5 129.4L174.5 129.5L175.5 129.0L176.5 129.4L177.5 129.6L178.5 129.5L179.5 129.6L180.5 129.5L181.5 129.3L182.5 129.3L183.5 128.7L184.5 129.3L185.5 129.1L186.5 129.5L187.5 129.3L188.5 129.7L189.5 129.4L190.5 129.7L191.5 128.8L192.5 129.0L193.5 129.5L194.5 129.1L195.5 128.5L196.5 129.6L197.5 128.7L198.5 129.2L199.5 129.1L200.5 128.6L201.5 129.2L202.5 129.1L203.5 128.8L204.5 128.4L205.5 126.9L206.5 127.5L207.5 128.3L208.5 128.9L209.5 127.2L210.5 128.8L211.5 121.3L212.5 127.4L213.5 125.2L214.5 128.0L215.5 123.8L216.5 126.5L217.5 123.2L218.5 126.5L219.5 124.4L220.5 128.2L221.5 123.5L222.5 127.8L223.5 125.0L224.5 128.1L225.5 126.6L226.5 128.6L227.5 123.3L228.5 127.4L229.5 121.1M240.5 129.2L241.5 119.0L242.5 126.7L243.5 125.7L244.5 126.1L245.5 120.7L246.5 128.8L247.5 122.4L248.5 126.4L249.5 121.8L250.5 126.8L251.5 124.4L252.5 128.8L253.5 125.2L254.5 127.3L255.5 105.3L256.5 127.5L257.5 120.3L258.5 127.5L259.5 121.3L260.5 118.1L261.5 125.5L262.5 126.7L263.5 120.7L264.5 127.5L265.5 122.6L266.5 126.5L267.5 121.4L268.5 128.8L269.5 120.7L270.5 127.3L271.5 125.6L272.5 126.9L273.5 121.2L274.5 127.4L275.5 122.7L276.5 126.1L277.5 119.0L278.5 129.2L279.5 129.1L280.5 128.7L281.5 128.5" stroke="#1c2cb4" stroke-width="1" fill="none" stroke-linejoin="round"/>
<path d="M75.5 31.5V131.0" stroke="#8a8a8a" stroke-width="1.2"/>
<path d="M75.5 31.5H205.7" stroke="#8a8a8a" stroke-width="1.2"/>
<path d="M281.5 31.5V131.0" stroke="#9a9a9a" stroke-width="1"/>
<path d="M83.5 30.0v3M95.5 30.0v3M108.5 30.0v3M120.5 30.0v3M132.5 30.0v3M144.5 30.0v3M157.5 30.0v3M169.5 30.0v3M181.5 30.0v3M193.5 30.0v3M206.5 30.0v3M218.5 30.0v3M230.5 30.0v3M242.5 30.0v3M255.5 30.0v3M267.5 30.0v3M279.5 30.0v3" stroke="#7a7a7a" stroke-width="1"/>
<path d="M74.0 124.5h3M74.0 117.5h3M74.0 110.5h3M74.0 102.5h3M74.0 95.5h3M74.0 88.5h3M74.0 81.5h3M74.0 74.5h3M74.0 67.5h3M74.0 60.5h3M74.0 52.5h3M74.0 45.5h3M74.0 38.5h3" stroke="#8a8a8a" stroke-width="1"/>
<path d="M75.5 40.1H281.5" stroke="#cc2a2a" stroke-width="1.3"/>
<path d="M71.5 131.3H283.5" stroke="#222" stroke-width="1.2"/>
<path d="M289.5 131.3l-5.500 -3v6z" fill="#fff" stroke="#d02020" stroke-width="1"/>
<text x="56.800" y="50.2" font-family="Liberation Sans" font-size="10.300" text-anchor="end" fill="#000">60</text><text x="62.300" y="50.2" font-family="Liberation Sans" font-size="10.300" fill="#000">k</text>
<text x="56.800" y="78.8" font-family="Liberation Sans" font-size="10.300" text-anchor="end" fill="#000">40</text><text x="62.300" y="78.8" font-family="Liberation Sans" font-size="10.300" fill="#000">k</text>
<text x="56.800" y="107.4" font-family="Liberation Sans" font-size="10.300" text-anchor="end" fill="#000">20</text><text x="62.300" y="107.4" font-family="Liberation Sans" font-size="10.300" fill="#000">k</text>
<text x="67.8" y="136.0" font-family="Liberation Sans" font-size="10.300" text-anchor="end" fill="#000">0</text>
<text x="98.4" y="143.6" font-family="Liberation Sans" font-size="10.300" text-anchor="middle" fill="#000">0</text>
<text x="122.9" y="143.6" font-family="Liberation Sans" font-size="10.300" text-anchor="middle" fill="#000">2</text>
<text x="147.4" y="143.6" font-family="Liberation Sans" font-size="10.300" text-anchor="middle" fill="#000">4</text>
<text x="171.9" y="143.6" font-family="Liberation Sans" font-size="10.300" text-anchor="middle" fill="#000">6</text>
<text x="196.4" y="143.6" font-family="Liberation Sans" font-size="10.300" text-anchor="middle" fill="#000">8</text>
<text x="220.9" y="143.6" font-family="Liberation Sans" font-size="10.300" text-anchor="middle" fill="#000">10</text>
<text x="245.4" y="143.6" font-family="Liberation Sans" font-size="10.300" text-anchor="middle" fill="#000">12</text>
<text x="269.9" y="143.6" font-family="Liberation Sans" font-size="10.300" text-anchor="middle" fill="#000">14</text>
<text x="70.7" y="19" font-family="Liberation Mono" font-weight="bold" font-size="13.400" fill="#000" textLength="160" lengthAdjust="spacingAndGlyphs">Dover : Serial0/0 Daily</text>
<text transform="translate(15.500,138) rotate(-90)" font-family="Liberation Mono" font-size="9.800" fill="#000" textLength="113" lengthAdjust="spacingAndGlyphs">traffic in bits/sec</text>
<text transform="translate(290,5) rotate(90)" font-family="Liberation Mono" font-size="6.600" fill="#8e8e8e" textLength="88" lengthAdjust="spacingAndGlyphs">RRDTOOL / TOBI OETIKER</text>
</svg></div>
<div class="abs cap" style="top:190px"><span id="c0" style="letter-spacing:0.283px;">Target: <i>router.dover.uk.adsweu.com.1</i></span></div>
<div class="abs tl" style="top:18px"><span id="t0" style="letter-spacing:-0.144px;"><a><b>Dover : Serial0/0</b></a></span></div>
<div class="abs tl" style="top:56px"><span id="t1" style="letter-spacing:-0.294px;">Last update: Tue Jan 29 14:55:46 2002</span></div>
<div class="abs tl" style="top:75px"><span id="t2" style="letter-spacing:-0.500px;">Bandwidth: 64k bits/s</span></div>
<div class="abs tl" style="top:94px"><span id="t3" style="letter-spacing:-0.261px;">Address: router.dover.uk.ema.adsw.com</span></div>
<div class="abs tl" style="top:113px"><span id="t4" style="letter-spacing:-0.400px;">Interface # 2</span></div>
<div class="abs tl" style="top:132px"><span id="t5" style="letter-spacing:-0.329px;">RRD File: router.dover.uk.adsweu.com.1.rrd</span></div>
<div class="abs tl" style="top:151px"><span id="t6" style="letter-spacing:-0.132px;"><b>IN</b> Max 33.78 k, Avg 3.88 k, Last 1.79 k</span></div>
<div class="abs tl" style="top:170px"><span id="t7" style="letter-spacing:-0.141px;"><b>OUT</b> Max 17.30 k, Avg 2.06 k, Last 1.51 k</span></div>
<div class="abs tl" style="top:189px"><span id="t8" style="letter-spacing:-0.368px;">Working day average:</span></div>
<div class="abs tl" style="top:208px"><span id="t9" style="letter-spacing:-0.133px;"><b>IN</b>= 8.12 k <b>OUT</b>= 3.86 k</span></div>
<div class="abs tl" style="top:227px"><span id="t10" style="letter-spacing:-0.444px;">Total traffic over last 24 hours:</span></div>
<div class="abs tl" style="top:246px"><span id="t11" style="letter-spacing:-0.245px;"><b>IN</b>=364.37Mbits <b>OUT</b>=197.12Mbits</span></div>
<div class="abs tl" style="top:265px"><span id="t12" style="letter-spacing:-0.427px;">95th Percentile for last 24 hours:</span></div>
<div class="abs tl" style="top:284px"><span id="t13" style="letter-spacing:-0.129px;"><b>IN</b>=17.98kbps <b>OUT</b>=7.36kbps</span></div>
<div class="abs" style="left:15px;top:307px;width:300px;height:171px"><svg width="300" height="171" viewBox="0 0 300 171" style="display:block">
<rect x="0" y="0" width="300" height="171" fill="#c4c4c4"/>
<rect x="2" y="2" width="296" height="167" fill="#f5f5f5"/>
<rect x="75.5" y="31.5" width="206.0" height="99.5" fill="#fff"/>
<rect x="205.7" y="31.5" width="75.8" height="99.5" fill="#fdfacc"/>
<rect x="230.2" y="31.5" width="9.6" height="99.5" fill="#d2d0d6"/>
<path d="M75.5 131.0V127.4M76.5 131.0V127.2M77.5 131.0V126.4M78.5 131.0V127.4M79.5 131.0V127.3M80.5 131.0V127.1M81.5 131.0V128.0M82.5 131.0V125.8M83.5 131.0V127.0M84.5 131.0V126.2M85.5 131.0V128.2M86.5 131.0V127.7M87.5 131.0V128.2M88.5 131.0V126.6M89.5 131.0V126.9M90.5 131.0V128.3M91.5 131.0V126.2M92.5 131.0V126.3M93.5 131.0V127.0M94.5 131.0V127.0M95.5 131.0V128.1M96.5 131.0V128.4M97.5 131.0V127.2M98.5 131.0V128.3M99.5 131.0V128.0M100.5 131.0V127.9M101.5 131.0V129.5M102.5 131.0V128.6M103.5 131.0V128.6M104.5 131.0V127.7M105.5 131.0V128.5M106.5 131.0V128.2M107.5 131.0V128.5M108.5 131.0V128.1M109.5 131.0V128.6M110.5 131.0V129.0M111.5 131.0V127.4M112.5 131.0V127.4M113.5 131.0V127.8M114.5 131.0V128.0M115.5 131.0V128.9M116.5 131.0V129.1M117.5 131.0V129.0M118.5 131.0V129.4M119.5 131.0V127.9M120.5 131.0V128.7M121.5 131.0V127.7M122.5 131.0V128.7M123.5 131.0V127.5M124.5 131.0V127.7M125.5 131.0V129.6M126.5 131.0V129.1M127.5 131.0V127.6M128.5 131.0V128.6M129.5 131.0V127.4M130.5 131.0V128.7M131.5 131.0V129.4M132.5 131.0V128.2M133.5 131.0V127.9M134.5 131.0V129.0M135.5 131.0V129.4M136.5 131.0V128.9M137.5 131.0V127.5M138.5 131.0V127.9M139.5 131.0V129.3M140.5 131.0V129.1M141.5 131.0V129.4M142.5 131.0V129.5M143.5 131.0V127.8M144.5 131.0V129.2M145.5 131.0V128.4M146.5 131.0V128.6M147.5 131.0V129.2M148.5 131.0V128.0M149.5 131.0V129.3M150.5 131.0V128.2M151.5 131.0V129.3M152.5 131.0V128.7M153.5 131.0V129.1M154.5 131.0V129.0M155.5 131.0V127.5M156.5 131.0V127.8M157.5 131.0V128.9M158.5 131.0V127.7M159.5 131.0V129.1M160.5 131.0V128.7M161.5 131.0V127.7M162.5 131.0V128.2M163.5 131.0V129.4M164.5 131.0V127.4M165.5 131.0V129.1M166.5 131.0V129.0M167.5 131.0V127.9M168.5 131.0V128.9M169.5 131.0V128.9M170.5 131.0V129.4M171.5 131.0V129.4M172.5 131.0V128.3M173.5 131.0V129.1M174.5 131.0V128.3M175.5 131.0V128.8M176.5 131.0V128.6M177.5 131.0V127.5M178.5 131.0V128.5M179.5 131.0V128.3M180.5 131.0V127.7M181.5 131.0V129.2M182.5 131.0V129.3M183.5 131.0V127.6M184.5 131.0V127.8M185.5 131.0V129.1M186.5 131.0V129.2M187.5 131.0V128.0M188.5 131.0V116.6M189.5 131.0V129.2M190.5 131.0V127.5M191.5 131.0V127.7M192.5 131.0V128.3M193.5 131.0V128.7M194.5 131.0V129.4M195.5 131.0V129.5M196.5 131.0V128.1M197.5 131.0V128.1M198.5 131.0V126.9M199.5 131.0V128.4M200.5 131.0V128.8M201.5 131.0V127.0M202.5 131.0V126.8M203.5 131.0V125.7M204.5 131.0V128.9M205.5 131.0V120.6M206.5 131.0V128.4M207.5 131.0V126.9M208.5 131.0V127.7M209.5 131.0V125.5M210.5 131.0V96.6M211.5 131.0V121.0M212.5 131.0V128.9M213.5 131.0V126.5M214.5 131.0V128.9M215.5 131.0V127.3M216.5 131.0V127.9M217.5 131.0V128.7M218.5 131.0V126.3M219.5 131.0V126.3M220.5 131.0V126.1M221.5 131.0V127.7M222.5 131.0V125.8M223.5 131.0V127.5M224.5 131.0V93.4M225.5 131.0V113.4M226.5 131.0V126.9M227.5 131.0V128.7M228.5 131.0V125.4M229.5 131.0V126.4M240.5 131.0V126.4M241.5 131.0V127.4M242.5 131.0V128.7M243.5 131.0V128.9M244.5 131.0V127.3M245.5 131.0V126.5M246.5 131.0V126.8M247.5 131.0V128.1M248.5 131.0V127.9M249.5 131.0V128.3M250.5 131.0V125.7M251.5 131.0V127.4M252.5 131.0V127.8M253.5 131.0V128.3M254.5 131.0V126.1M255.5 131.0V125.8M256.5 131.0V126.9M257.5 131.0V128.5M258.5 131.0V126.0M259.5 131.0V126.4M260.5 131.0V128.0M261.5 131.0V94.6M262.5 131.0V128.2M263.5 131.0V126.7M264.5 131.0V127.9M265.5 131.0V125.5M266.5 131.0V128.7M267.5 131.0V125.9M268.5 131.0V126.4M269.5 131.0V127.9M270.5 131.0V128.9M271.5 131.0V127.4M272.5 131.0V75.0M273.5 131.0V118.2M274.5 131.0V126.7M275.5 131.0V126.7M276.5 131.0V126.1M277.5 131.0V126.5M278.5 131.0V127.3M279.5 131.0V129.0M280.5 131.0V126.4" stroke="#1ec81e" stroke-width="1.25" fill="none"/>
<path d="M77.0 123.5H281.5M77.0 115.5H281.5M77.0 107.5H281.5M77.0 99.5H281.5M77.0 83.5H281.5M77.0 75.5H281.5M77.0 67.5H281.5M77.0 59.5H281.5M77.0 43.5H281.5M77.0 35.5H281.5" stroke="#8a8a8a" stroke-width="1" stroke-dasharray="1 1" fill="none"/>
<path d="M83.5 32.0V131.0M108.5 32.0V131.0M120.5 32.0V131.0M132.5 32.0V131.0M144.5 32.0V131.0M157.5 32.0V131.0M169.5 32.0V131.0M181.5 32.0V131.0M193.5 32.0V131.0M206.5 32.0V131.0M218.5 32.0V131.0M230.5 32.0V131.0M242.5 32.0V131.0M255.5 32.0V131.0M267.5 32.0V131.0M279.5 32.0V131.0" stroke="#8a8a8a" stroke-width="1" stroke-dasharray="1 1" fill="none"/>
<path d="M77.0 91.5H283.5M77.0 51.5H283.5" stroke="#8c1c1c" stroke-width="1" stroke-dasharray="1 1" fill="none"/>
<path d="M72.5 91.5h4M279.5 91.5h4M72.5 51.5h4M279.5 51.5h4" stroke="#8c1c1c" stroke-width="1" fill="none"/>
<path d="M95.5 30.0V134.0" stroke="#8c1c1c" stroke-width="1" stroke-dasharray="1 1"/>
<path d="M75.5 131.0V127.4M76.5 131.0V127.2M77.5 131.0V126.4M78.5 131.0V127.4M79.5 131.0V127.3M80.5 131.0V127.1M81.5 131.0V128.0M82.5 131.0V125.8M83.5 131.0V127.0M84.5 131.0V126.2M85.5 131.0V128.2M86.5 131.0V127.7M87.5 131.0V128.2M88.5 131.0V126.6M89.5 131.0V126.9M90.5 131.0V128.3M91.5 131.0V126.2M92.5 131.0V126.3M93.5 131.0V127.0M94.5 131.0V127.0M95.5 131.0V128.1M96.5 131.0V128.4M97.5 131.0V127.2M98.5 131.0V128.3M99.5 131.0V128.0M100.5 131.0V127.9M101.5 131.0V129.5M102.5 131.0V128.6M103.5 131.0V128.6M104.5 131.0V127.7M105.5 131.0V128.5M106.5 131.0V128.2M107.5 131.0V128.5M108.5 131.0V128.1M109.5 131.0V128.6M110.5 131.0V129.0M111.5 131.0V127.4M112.5 131.0V127.4M113.5 131.0V127.8M114.5 131.0V128.0M115.5 131.0V128.9M116.5 131.0V129.1M117.5 131.0V129.0M118.5 131.0V129.4M119.5 131.0V127.9M120.5 131.0V128.7M121.5 131.0V127.7M122.5 131.0V128.7M123.5 131.0V127.5M124.5 131.0V127.7M125.5 131.0V129.6M126.5 131.0V129.1M127.5 131.0V127.6M128.5 131.0V128.6M129.5 131.0V127.4M130.5 131.0V128.7M131.5 131.0V129.4M132.5 131.0V128.2M133.5 131.0V127.9M134.5 131.0V129.0M135.5 131.0V129.4M136.5 131.0V128.9M137.5 131.0V127.5M138.5 131.0V127.9M139.5 131.0V129.3M140.5 131.0V129.1M141.5 131.0V129.4M142.5 131.0V129.5M143.5 131.0V127.8M144.5 131.0V129.2M145.5 131.0V128.4M146.5 131.0V128.6M147.5 131.0V129.2M148.5 131.0V128.0M149.5 131.0V129.3M150.5 131.0V128.2M151.5 131.0V129.3M152.5 131.0V128.7M153.5 131.0V129.1M154.5 131.0V129.0M155.5 131.0V127.5M156.5 131.0V127.8M157.5 131.0V128.9M158.5 131.0V127.7M159.5 131.0V129.1M160.5 131.0V128.7M161.5 131.0V127.7M162.5 131.0V128.2M163.5 131.0V129.4M164.5 131.0V127.4M165.5 131.0V129.1M166.5 131.0V129.0M167.5 131.0V127.9M168.5 131.0V128.9M169.5 131.0V128.9M170.5 131.0V129.4M171.5 131.0V129.4M172.5 131.0V128.3M173.5 131.0V129.1M174.5 131.0V128.3M175.5 131.0V128.8M176.5 131.0V128.6M177.5 131.0V127.5M178.5 131.0V128.5M179.5 131.0V128.3M180.5 131.0V127.7M181.5 131.0V129.2M182.5 131.0V129.3M183.5 131.0V127.6M184.5 131.0V127.8M185.5 131.0V129.1M186.5 131.0V129.2M187.5 131.0V128.0M188.5 131.0V116.6M189.5 131.0V129.2M190.5 131.0V127.5M191.5 131.0V127.7M192.5 131.0V128.3M193.5 131.0V128.7M194.5 131.0V129.4M195.5 131.0V129.5M196.5 131.0V128.1M197.5 131.0V128.1M198.5 131.0V126.9M199.5 131.0V128.4M200.5 131.0V128.8M201.5 131.0V127.0M202.5 131.0V126.8M203.5 131.0V125.7M204.5 131.0V128.9M205.5 131.0V120.6M206.5 131.0V128.4M207.5 131.0V126.9M208.5 131.0V127.7M209.5 131.0V125.5M210.5 131.0V96.6M211.5 131.0V121.0M212.5 131.0V128.9M213.5 131.0V126.5M214.5 131.0V128.9M215.5 131.0V127.3M216.5 131.0V127.9M217.5 131.0V128.7M218.5 131.0V126.3M219.5 131.0V126.3M220.5 131.0V126.1M221.5 131.0V127.7M222.5 131.0V125.8M223.5 131.0V127.5M224.5 131.0V93.4M225.5 131.0V113.4M226.5 131.0V126.9M227.5 131.0V128.7M228.5 131.0V125.4M229.5 131.0V126.4M240.5 131.0V126.4M241.5 131.0V127.4M242.5 131.0V128.7M243.5 131.0V128.9M244.5 131.0V127.3M245.5 131.0V126.5M246.5 131.0V126.8M247.5 131.0V128.1M248.5 131.0V127.9M249.5 131.0V128.3M250.5 131.0V125.7M251.5 131.0V127.4M252.5 131.0V127.8M253.5 131.0V128.3M254.5 131.0V126.1M255.5 131.0V125.8M256.5 131.0V126.9M257.5 131.0V128.5M258.5 131.0V126.0M259.5 131.0V126.4M260.5 131.0V128.0M261.5 131.0V94.6M262.5 131.0V128.2M263.5 131.0V126.7M264.5 131.0V127.9M265.5 131.0V125.5M266.5 131.0V128.7M267.5 131.0V125.9M268.5 131.0V126.4M269.5 131.0V127.9M270.5 131.0V128.9M271.5 131.0V127.4M272.5 131.0V75.0M273.5 131.0V118.2M274.5 131.0V126.7M275.5 131.0V126.7M276.5 131.0V126.1M277.5 131.0V126.5M278.5 131.0V127.3M279.5 131.0V129.0M280.5 131.0V126.4" stroke="#1ec81e" stroke-width="1.25" fill="none" opacity=".8"/>
<path d="M75.5 129.7L76.5 129.6L77.5 129.5L78.5 129.0L79.5 129.3L80.5 129.1L81.5 128.9L82.5 129.4L83.5 128.9L84.5 128.7L85.5 129.9L86.5 128.7L87.5 129.0L88.5 129.8L89.5 129.4L90.5 129.1L91.5 128.7L92.5 129.5L93.5 129.2L94.5 128.8L95.5 128.9L96.5 128.7L97.5 129.4L98.5 129.1L99.5 129.7L100.5 129.0L101.5 128.9L102.5 129.1L103.5 129.0L104.5 129.7L105.5 128.7L106.5 128.6L107.5 128.6L108.5 129.2L109.5 128.9L110.5 129.6L111.5 128.7L112.5 128.8L113.5 129.5L114.5 129.9L115.5 129.4L116.5 129.2L117.5 128.9L118.5 129.3L119.5 130.0L120.5 127.0L121.5 129.9L122.5 128.9L123.5 129.8L124.5 129.5L125.5 128.9L126.5 129.8L127.5 129.8L128.5 129.3L129.5 129.0L130.5 128.8L131.5 129.0L132.5 128.7L133.5 129.3L134.5 128.7L135.5 129.9L136.5 129.7L137.5 129.3L138.5 129.6L139.5 129.0L140.5 129.1L141.5 129.3L142.5 128.8L143.5 129.2L144.5 129.6L145.5 129.5L146.5 128.8L147.5 128.7L148.5 129.7L149.5 128.8L150.5 128.6L151.5 129.3L152.5 129.2L153.5 129.7L154.5 129.2L155.5 129.3L156.5 129.2L157.5 130.0L158.5 128.6L159.5 129.3L160.5 129.4L161.5 128.9L162.5 129.2L163.5 129.3L164.5 129.0L165.5 129.9L166.5 129.2L167.5 129.4L168.5 128.7L169.5 128.7L170.5 129.6L171.5 129.3L172.5 129.8L173.5 129.4L174.5 128.9L175.5 128.7L176.5 129.3L177.5 129.6L178.5 129.7L179.5 129.1L180.5 128.7L181.5 129.8L182.5 128.9L183.5 130.0L184.5 129.7L185.5 129.7L186.5 129.0L187.5 129.5L188.5 124.6L189.5 129.1L190.5 129.9L191.5 129.0L192.5 129.8L193.5 129.3L194.5 129.6L195.5 129.7L196.5 129.3L197.5 129.4L198.5 129.5L199.5 129.4L200.5 129.3L201.5 129.4L202.5 127.8L203.5 127.6L204.5 127.4L205.5 128.2L206.5 127.1L207.5 128.9L208.5 128.3L209.5 126.8L210.5 123.4L211.5 128.2L212.5 129.4L213.5 128.0L214.5 128.6L215.5 128.1L216.5 129.6L217.5 127.2L218.5 128.4L219.5 127.8L220.5 127.9L221.5 129.6L222.5 129.8L223.5 128.2L224.5 124.2L225.5 129.4L226.5 128.0L227.5 126.8L228.5 129.7L229.5 127.7M240.5 128.3L241.5 128.3L242.5 128.2L243.5 128.6L244.5 128.5L245.5 127.9L246.5 129.0L247.5 128.7L248.5 128.2L249.5 127.5L250.5 127.5L251.5 128.2L252.5 127.3L253.5 129.8L254.5 118.2L255.5 109.0L256.5 118.2L257.5 129.8L258.5 128.0L259.5 127.0L260.5 127.5L261.5 123.0L262.5 128.0L263.5 129.2L264.5 129.3L265.5 128.2L266.5 128.7L267.5 127.3L268.5 128.2L269.5 128.1L270.5 127.5L271.5 127.7L272.5 125.4L273.5 128.6L274.5 127.7L275.5 128.8L276.5 129.5L277.5 129.3L278.5 127.8L279.5 128.2L280.5 127.5L281.5 127.3" stroke="#1c2cb4" stroke-width="1" fill="none" stroke-linejoin="round"/>
<path d="M75.5 31.5V131.0" stroke="#8a8a8a" stroke-width="1.2"/>
<path d="M75.5 31.5H205.7" stroke="#8a8a8a" stroke-width="1.2"/>
<path d="M281.5 31.5V131.0" stroke="#9a9a9a" stroke-width="1"/>
<path d="M83.5 30.0v3M95.5 30.0v3M108.5 30.0v3M120.5 30.0v3M132.5 30.0v3M144.5 30.0v3M157.5 30.0v3M169.5 30.0v3M181.5 30.0v3M193.5 30.0v3M206.5 30.0v3M218.5 30.0v3M230.5 30.0v3M242.5 30.0v3M255.5 30.0v3M267.5 30.0v3M279.5 30.0v3" stroke="#7a7a7a" stroke-width="1"/>
<path d="M74.0 123.5h3M74.0 115.5h3M74.0 107.5h3M74.0 99.5h3M74.0 91.5h3M74.0 83.5h3M74.0 75.5h3M74.0 67.5h3M74.0 59.5h3M74.0 51.5h3M74.0 43.5h3M74.0 35.5h3" stroke="#8a8a8a" stroke-width="1"/>
<path d="M75.5 35.6H281.5" stroke="#cc2a2a" stroke-width="1.3"/>
<path d="M71.5 131.3H283.5" stroke="#222" stroke-width="1.2"/>
<path d="M289.5 131.3l-5.500 -3v6z" fill="#fff" stroke="#d02020" stroke-width="1"/>
<text x="56.800" y="56.0" font-family="Liberation Sans" font-size="10.300" text-anchor="end" fill="#000">20</text><text x="62.300" y="56.0" font-family="Liberation Sans" font-size="10.300" fill="#000">k</text>
<text x="56.800" y="96.0" font-family="Liberation Sans" font-size="10.300" text-anchor="end" fill="#000">10</text><text x="62.300" y="96.0" font-family="Liberation Sans" font-size="10.300" fill="#000">k</text>
<text x="67.8" y="136.0" font-family="Liberation Sans" font-size="10.300" text-anchor="end" fill="#000">0</text>
<text x="98.4" y="143.6" font-family="Liberation Sans" font-size="10.300" text-anchor="middle" fill="#000">0</text>
<text x="122.9" y="143.6" font-family="Liberation Sans" font-size="10.300" text-anchor="middle" fill="#000">2</text>
<text x="147.4" y="143.6" font-family="Liberation Sans" font-size="10.300" text-anchor="middle" fill="#000">4</text>
<text x="171.9" y="143.6" font-family="Liberation Sans" font-size="10.300" text-anchor="middle" fill="#000">6</text>
<text x="196.4" y="143.6" font-family="Liberation Sans" font-size="10.300" text-anchor="middle" fill="#000">8</text>
<text x="220.9" y="143.6" font-family="Liberation Sans" font-size="10.300" text-anchor="middle" fill="#000">10</text>
<text x="245.4" y="143.6" font-family="Liberation Sans" font-size="10.300" text-anchor="middle" fill="#000">12</text>
<text x="269.9" y="143.6" font-family="Liberation Sans" font-size="10.300" text-anchor="middle" fill="#000">14</text>
<text x="52.5" y="19" font-family="Liberation Mono" font-weight="bold" font-size="13.400" fill="#000" textLength="195" lengthAdjust="spacingAndGlyphs">Dover, UK: 172.17.2.13 Daily</text>
<text transform="translate(15.500,138) rotate(-90)" font-family="Liberation Mono" font-size="9.800" fill="#000" textLength="113" lengthAdjust="spacingAndGlyphs">traffic in bits/sec</text>
<text transform="translate(290,5) rotate(90)" font-family="Liberation Mono" font-size="6.600" fill="#8e8e8e" textLength="88" lengthAdjust="spacingAndGlyphs">RRDTOOL / TOBI OETIKER</text>
</svg></div>
<div class="abs cap" style="top:479px"><span id="c1" style="letter-spacing:0.217px;">Target: <i>dover-pav.1</i></span></div>
<div class="abs tl" style="top:307px"><span id="t14" style="letter-spacing:-0.108px;"><a><b>Dover (172.17.2.13): Serial0/0.1 (pav)</b></a></span></div>
<div class="abs tl" style="top:345px"><span id="t15" style="letter-spacing:-0.294px;">Last update: Tue Jan 29 14:55:46 2002</span></div>
<div class="abs tl" style="top:364px"><span id="t16" style="letter-spacing:-0.500px;">Bandwidth: 24k bits/s</span></div>
<div class="abs tl" style="top:383px"><span id="t17" style="letter-spacing:-0.261px;">Address: router.dover.uk.ema.adsw.com</span></div>
<div class="abs tl" style="top:402px"><span id="t18" style="letter-spacing:-0.229px;">Interface IP: 172.17.2.13</span></div>
<div class="abs tl" style="top:421px"><span id="t19" style="letter-spacing:-0.367px;">RRD File: dover-pav.1.rrd</span></div>
<div class="abs tl" style="top:440px"><span id="t20" style="letter-spacing:-0.111px;"><b>IN</b> Max 14.02 k, Avg 1.00 k, Last 715.79</span></div>
<div class="abs tl" style="top:459px"><span id="t21" style="letter-spacing:-0.167px;"><b>OUT</b> Max 5.48 k, Avg 580.94 , Last 409.20</span></div>
<div class="abs tl" style="top:478px"><span id="t22" style="letter-spacing:-0.368px;">Working day average:</span></div>
<div class="abs tl" style="top:497px"><span id="t23" style="letter-spacing:-0.090px;"><b>IN</b>= 1.56 k <b>OUT</b>=846.39</span></div>
<div class="abs tl" style="top:516px"><span id="t24" style="letter-spacing:-0.444px;">Total traffic over last 24 hours:</span></div>
<div class="abs tl" style="top:535px"><span id="t25" style="letter-spacing:-0.261px;"><b>IN</b>=108.30Mbits <b>OUT</b>=54.28Mbits</span></div>
<div class="abs tl" style="top:554px"><span id="t26" style="letter-spacing:-0.427px;">95th Percentile for last 24 hours:</span></div>
<div class="abs tl" style="top:573px"><span id="t27" style="letter-spacing:-0.129px;"><b>IN</b>=4.95kbps <b>OUT</b>=1.48kbps</span></div>
<!--/RF-->
</div>
<!-- right scrollbar -->
<div class="abs sbtrack" style="left:1006px;top:138px;width:16px;height:580px"></div>
<div class="abs sbbtn" style="left:1006px;top:138px;width:16px;height:16px"><svg width="12" height="12" viewBox="0 0 12 12"><path d="M2.500 7.500h7L6 4z" fill="#000"/></svg></div>
<div class="abs sbbtn" style="left:1006px;top:154px;width:16px;height:251px"></div>
<div class="abs sbbtn" style="left:1006px;top:702px;width:16px;height:16px"><svg width="12" height="12" viewBox="0 0 12 12"><path d="M2.500 4.500h7L6 8z" fill="#000"/></svg></div>
<!-- STATUS -->
<div class="abs hline" style="top:719px;background:#fff;left:1px;width:1023px"></div>
<div class="abs hline" style="top:720px;background:#d4d0c8"></div>
<div id="status" class="abs">
  <div class="abs sp" style="left:0px;width:822px"></div>
  <div class="abs sp" style="left:824px;width:22px"></div>
  <div class="abs sp" style="left:848px;width:22px"></div>
  <div class="abs sp" style="left:872px;width:150px"></div>
  <svg class="abs" style="left:2px;top:3px" width="16" height="16" viewBox="0 0 16 16"><path d="M4 1h8l3 3v11H4z" fill="#fbfbf6" stroke="#666" stroke-width=".8"/><path d="M12 1v3h3" fill="#ddd" stroke="#666" stroke-width=".8"/><ellipse cx="6.300" cy="8.500" rx="4.200" ry="3.900" fill="none" stroke="#2a52c8" stroke-width="2.300"/><path d="M2.500 8.600h7.500" stroke="#2a52c8" stroke-width="1.800"/><rect x="7.200" y="9.600" width="5" height="1.800" fill="#fbfbf6"/><path d="M0.800 11.500c3-6 7-7.500 10-6.500" stroke="#6fa0ee" stroke-width="1.100" fill="none"/></svg>
  <div class="abs ui" style="left:22px;top:5px">Done</div>
  <svg class="abs" style="left:875px;top:2px" width="17" height="18" viewBox="0 0 17 18"><rect x="9" y="3" width="7" height="5" fill="#e8e8e8" stroke="#333" stroke-width=".9"/><rect x="10.500" y="4.300" width="4" height="2.400" fill="#1c8ca8"/><rect x="9" y="10" width="7" height="5" fill="#e8e8e8" stroke="#333" stroke-width=".9"/><rect x="10.500" y="11.300" width="4" height="2.400" fill="#1c8ca8"/><rect x="1" y="5" width="9" height="8" fill="#e8e8e8" stroke="#222" stroke-width="1.100"/><rect x="2.500" y="6.500" width="6" height="5" fill="#38b8d0"/><path d="M0.500 15.500h10M2 13.500h7" stroke="#222" stroke-width="1.200"/><path d="M4 2.500l2 2 3.500-3.500" stroke="#18a018" stroke-width="1.600" fill="none"/></svg>
  <div class="abs ui" style="left:895px;top:5px;letter-spacing:-.150px">Local intranet</div>
</div>
<!-- TASKBAR -->
<div class="abs hline" style="top:741px;background:#fff"></div>
<div id="taskbar" class="abs">
  <div class="abs tb" style="left:2px;width:55px">
    <svg class="abs" style="left:3px;top:2px" width="17" height="17" viewBox="0 0 17 17"><path d="M6 3C8 1.200 10 1.200 11.500 2.600C13 1.200 15 1.200 16.500 3V14.800C15 13.200 13 13.200 11.500 14.600C10 13.200 8 13.200 6 14.800Z" fill="#000"/><rect x="7.500" y="4.200" width="2.900" height="3.900" fill="#e02828"/><rect x="11.700" y="4.200" width="2.900" height="3.900" fill="#28c448"/><rect x="7.500" y="9.200" width="2.900" height="3.900" fill="#1c38e8"/><rect x="11.700" y="9.200" width="2.900" height="3.900" fill="#f0e448"/><path d="M0 4.500h6M0 14h6" stroke="#000" stroke-width="1" stroke-dasharray="1 1"/><path d="M1 6.500h5M1 8.500h5" stroke="#e02828" stroke-width="1" stroke-dasharray="2 1"/><path d="M0 10.500h6M0 12.500h6" stroke="#1c38e8" stroke-width="1" stroke-dasharray="2 1"/></svg>
    <span class="abs ui tt" style="left:21.500px;letter-spacing:.600px"><b>Start</b></span>
  </div>
  <div class="abs vsep" style="left:60px;top:2px;height:20px"></div>
  <div class="abs grip" style="left:63px;top:4px;height:18px"></div>
  <svg class="abs" style="left:73px;top:5px" width="18" height="17" viewBox="0 0 18 17"><rect x="1" y="3" width="14.500" height="12.500" fill="#38a0b8" stroke="#14506c" stroke-width="1"/><rect x="3" y="5" width="10.500" height="8.500" fill="#f4f0d8"/><rect x="5.500" y="8" width="4.500" height="4.500" fill="#fff" stroke="#222" stroke-width=".9"/><path d="M8 10.500l8-9.500" stroke="#e8a020" stroke-width="2.200"/><path d="M8 10.500l1-2" stroke="#222" stroke-width="1"/></svg>
  <svg class="abs" style="left:97px;top:4px" width="18" height="18" viewBox="0 0 18 18"><ellipse cx="8.800" cy="9.800" rx="5.800" ry="5.600" fill="none" stroke="#2468e0" stroke-width="3.200"/><path d="M4 9.800h10" stroke="#2468e0" stroke-width="2.300"/><rect x="10" y="11" width="6.500" height="2.500" fill="#d4d0c8"/><path d="M1 15C3 7 10 2.500 16.500 3.500" stroke="#48a0f0" stroke-width="1.500" fill="none"/></svg>
  <svg class="abs" style="left:119px;top:5px" width="18" height="17" viewBox="0 0 18 17"><rect x="2.500" y="4" width="13.500" height="9" fill="#f8f4c8" stroke="#444" stroke-width="1"/><rect x="12" y="6" width="2" height="2" fill="#e02020"/><path d="M2 6c0-3.500 4-5 7-3.500M5 1.500L9.500 2.500 7.500 6" stroke="#2050d8" stroke-width="1.800" fill="none"/><path d="M15 11c0 3.500-4 5-7 3.500M12 15.500L7.500 14.500 9.500 11" stroke="#2050d8" stroke-width="1.800" fill="none"/></svg>
  <svg class="abs" style="left:142px;top:5px" width="18" height="17" viewBox="0 0 18 17"><path d="M1 2.500h5l1 1.500h7.500v10H1z" fill="#f0e890" stroke="#8c8430" stroke-width="1"/><circle cx="7" cy="7.500" r="3.800" fill="#a8ecf0" stroke="#1c4cb0" stroke-width="1.600"/><path d="M10 10.500l6 5" stroke="#1c4cb0" stroke-width="2.600"/></svg>
  <div class="abs vsep" style="left:167px;top:2px;height:20px"></div>
  <div class="abs grip" style="left:170px;top:4px;height:18px"></div>
<div class="abs tb" style="left:178px;width:60px"><svg class="abs" style="left:3px;top:2px" width="17" height="17" viewBox="0 0 17 17"><rect x="8" y="1" width="7" height="13" fill="#d8d8d8" stroke="#555" stroke-width="1"/><path d="M9.500 3.500h4M9.500 5.500h4" stroke="#777" stroke-width="1"/><rect x="1.500" y="7" width="8" height="6.500" fill="#ccc" stroke="#333" stroke-width="1"/><rect x="3" y="8.300" width="5" height="3.800" fill="#1838c8"/><path d="M0.500 15.500h11" stroke="#333" stroke-width="1.600"/><path d="M12 15.500h4" stroke="#555" stroke-width="1.200"/></svg><span class="abs ui tt" style="left:21px">C:\...</span></div>
<div class="abs tb tbp" style="left:241px;width:60px"><svg class="abs" style="left:3px;top:2px" width="17" height="17" viewBox="0 0 17 17"><path d="M4 1h8.500l3 3v12H4z" fill="#fbfbf6" stroke="#777" stroke-width=".8"/><path d="M12.500 1v3h3" fill="#ddd" stroke="#777" stroke-width=".8"/><ellipse cx="6.500" cy="9" rx="4.300" ry="4" fill="none" stroke="#2a62d8" stroke-width="2.300"/><path d="M2.500 9h8" stroke="#2a62d8" stroke-width="1.800"/><rect x="7.500" y="10" width="5" height="2" fill="#fbfbf6"/><path d="M0.800 12c3-6 7-8 10.500-7" stroke="#6fa0ee" stroke-width="1.100" fill="none"/></svg><span class="abs ui tt" style="left:21px"><b>Rout...</b></span></div>
<div class="abs tb" style="left:304px;width:60px"><svg class="abs" style="left:4px;top:3px" width="17" height="16" viewBox="0 0 17 16"><rect x="0.500" y="1.500" width="15" height="12.500" fill="#f4e838" stroke="#55501c" stroke-width="1"/><rect x="3" y="0.500" width="10" height="2" fill="#a03020"/><rect x="3" y="0.500" width="10" height="1" fill="#3c8c3c"/><circle cx="5.500" cy="6.500" r=".9" fill="#222"/><circle cx="10.500" cy="6.500" r=".9" fill="#222"/><path d="M4.500 9.500c2 2.200 5 2.200 7 0" stroke="#222" stroke-width="1" fill="none"/></svg><span class="abs ui tt" style="left:21px">Ches...</span></div>
<div class="abs tb" style="left:367px;width:60px"><svg class="abs" style="left:4px;top:3px" width="16" height="13" viewBox="0 0 16 13"><rect x="0" y="0" width="15" height="11.500" fill="#000"/><rect x="0" y="0" width="15" height="2" fill="#28308c"/><text x="1" y="8.800" font-family="Liberation Sans" font-size="6.500" font-weight="bold" fill="#fff">C:\</text></svg><span class="abs ui tt" style="left:21px">C:\...</span></div>
<div class="abs tb" style="left:430px;width:60px"><svg class="abs" style="left:4px;top:2px" width="15" height="17" viewBox="0 0 15 17"><rect x="1.500" y="2.500" width="11" height="13" rx="1.500" fill="#fff" stroke="#333" stroke-width="1.100"/><path d="M3 1.500v2M5 1.500v2M7 1.500v2M9 1.500v2M11 1.500v2" stroke="#333" stroke-width=".9"/><path d="M4 6.500h6M4 8.500h6M4 10.500h6M4 12.500h6" stroke="#222" stroke-width="1"/></svg><span class="abs ui tt" style="left:20px">inde...</span></div>
<div class="abs tb" style="left:493px;width:60px"><svg class="abs" style="left:3px;top:2px" width="18" height="17" viewBox="0 0 18 17"><ellipse cx="8" cy="9" rx="7.200" ry="5.800" fill="#e8a040" stroke="#7a3c10" stroke-width="1"/><circle cx="4.500" cy="8" r="1.500" fill="#2858d0"/><circle cx="7.500" cy="5.500" r="1.400" fill="#d02020"/><circle cx="11" cy="6.500" r="1.400" fill="#30a030"/><ellipse cx="7" cy="11.500" rx="2.300" ry="1.500" fill="#fff"/><path d="M2 1l11 11" stroke="#28287c" stroke-width="1.800"/><path d="M15.500 12.500v3M14.500 16h2" stroke="#000" stroke-width="1"/></svg><span class="abs ui tt" style="left:20px">Jasc ...</span></div>

  <div class="abs sunk" style="left:631px;top:1px;width:76px;height:22px"></div>
  <div class="abs" style="left:635px;top:3px;width:44px;height:17px;background:#6c6c6c;border:1px solid #d8d8d8;border-right-color:#888;border-bottom-color:#aaa"><div class="abs" style="left:0;top:0;width:17px;height:15px;background:linear-gradient(180deg,#b8f090,#70e048 40%,#58d030)"></div><div class="abs ui" style="left:8px;top:0px;font-weight:bold;font-size:12.500px;line-height:15px">40%</div></div>
  <div class="abs" style="left:679px;top:8px;width:4px;height:7px;background:#a0a0a0;border:1px solid #e8e8e8;border-left:none"></div>
  <svg class="abs" style="left:690px;top:3px" width="13" height="18" viewBox="0 0 13 18"><rect x="4" y="0.500" width="4.500" height="2.500" fill="#f0e048" stroke="#000" stroke-width="1"/><rect x="1" y="2.500" width="10.500" height="14.500" rx="1" fill="#f4e850" stroke="#000" stroke-width="1.300"/><path d="M6.200 5v8" stroke="#b03818" stroke-width="1.500"/><path d="M4 7.500l2.200-2.500 2.200 2.500" stroke="#b03818" stroke-width="1.100" fill="none"/><rect x="3" y="13" width="6.500" height="2.500" fill="#fff8b0"/></svg>
  <div class="abs sunk" style="left:712px;top:1px;width:309px;height:22px"></div>

<svg class="abs" style="left:718px;top:4px" width="12" height="17" viewBox="0 0 12 17"><rect x="3.500" y="0.500" width="5" height="2" fill="#999" stroke="#444" stroke-width=".7"/><rect x="1" y="2" width="10" height="14" rx="2" fill="#e8e8f0" stroke="#333" stroke-width="1"/><rect x="1.500" y="9" width="9" height="6.500" rx="1.500" fill="#1c38c8"/><path d="M4 5.500h4M6 3.500v4" stroke="#d01818" stroke-width="1.400"/></svg>
<svg class="abs" style="left:733px;top:4px" width="18" height="17" viewBox="0 0 18 17"><path d="M1 11l6-4h10l-6 4z" fill="#e0e0e0" stroke="#333" stroke-width=".9"/><path d="M1 11v3l10 0 6-4v-3l-6 4z" fill="#999" stroke="#333" stroke-width=".9"/><path d="M15 1l-8 4.500 1.200 1.600-5.200.4 1.800-4.800 1.200 1.500 8-4.500z" fill="#28b428" stroke="#0c5c0c" stroke-width=".7"/></svg>
<svg class="abs" style="left:752px;top:4px" width="17" height="17" viewBox="0 0 17 17"><path d="M4.500 1.500h11v9.500h-11z" fill="#222" stroke="#000" stroke-width="1"/><rect x="6" y="3" width="8" height="6.500" fill="#6cd0e8"/><path d="M4.500 11L1 15.500h11.500l3-4.500z" fill="#444" stroke="#000" stroke-width=".9"/><path d="M4 13.500h7" stroke="#c03030" stroke-width="1"/></svg>
<svg class="abs" style="left:770px;top:4px" width="17" height="17" viewBox="0 0 17 17"><path d="M2 6h3l4-3.500v12L5 11H2z" fill="#f0e048" stroke="#555" stroke-width=".8"/><path d="M9 3v11h4V3z" fill="#e8e8e8" stroke="#777" stroke-width=".6"/><circle cx="8.500" cy="8.500" r="7.200" fill="none" stroke="#e01818" stroke-width="1.600"/><path d="M3.500 13.500l10-10" stroke="#e01818" stroke-width="1.600"/></svg>
<svg class="abs" style="left:787px;top:4px" width="18" height="17" viewBox="0 0 18 17"><rect x="1" y="1" width="6.500" height="5.500" fill="#e8e8e8" stroke="#333" stroke-width="1"/><rect x="10.500" y="1" width="6.500" height="5.500" fill="#e8e8e8" stroke="#333" stroke-width="1"/><rect x="6" y="11" width="6.500" height="5.500" fill="#e8e8e8" stroke="#333" stroke-width="1"/><path d="M4 6.500L9 11l5-4.500" stroke="#333" stroke-width="1" fill="none"/><circle cx="9" cy="8" r="3" fill="#e81818"/></svg>
<svg class="abs" style="left:806px;top:4px" width="17" height="17" viewBox="0 0 17 17"><path d="M3 3v9M6.500 2v9M3 3l3.500-1M3 5l3.500-1" stroke="#1c8c1c" stroke-width="1.500" fill="none"/><ellipse cx="2.200" cy="12.500" rx="2" ry="1.500" fill="#1c8c1c"/><ellipse cx="5.700" cy="11.500" rx="2" ry="1.500" fill="#1c8c1c"/><path d="M9.500 2v13M12 4v9M14.500 6v5" stroke="#a8a020" stroke-width="1.400"/><path d="M8 14.500h8" stroke="#1c6c1c" stroke-width="1.300" stroke-dasharray="2 1"/></svg>
<div class="abs" style="left:823px;top:7px;font-size:10px;font-weight:bold;font-family:'Liberation Sans',sans-serif">S</div>
<svg class="abs" style="left:829px;top:3px" width="8" height="19" viewBox="0 0 8 19"><circle cx="4" cy="9.500" r="2" fill="#2030e0"/><path d="M1 5c2-2 4-2 6 0M0.500 2.500c2.300-2.300 4.700-2.300 7 0M1 14c2 2 4 2 6 0M0.500 16.500c2.300 2.300 4.700 2.300 7 0" stroke="#2030e0" stroke-width="1.200" fill="none"/></svg>
<div class="abs" style="left:836px;top:7px;font-size:10px;font-weight:bold;font-family:'Liberation Sans',sans-serif">F</div>
<svg class="abs" style="left:842px;top:5px" width="16" height="15" viewBox="0 0 16 15"><defs><pattern id="ck" width="4" height="4" patternUnits="userSpaceOnUse"><rect width="4" height="4" fill="#1c50c8"/><rect width="2" height="2" fill="#30b040"/><rect x="2" y="2" width="2" height="2" fill="#30b040"/></pattern></defs><path d="M1.500 0v15" stroke="#2c5c2c" stroke-width="1.600"/><path d="M2.500 1c4-1.500 8 1.500 13 0v10c-5 1.500-9-1.500-13 0z" fill="url(#ck)"/></svg>
<div class="abs" style="left:860px;top:5px;width:16px;height:16px;background:#1c2c9c;color:#fff;font-size:11px;line-height:16px;text-align:center;font-family:'Liberation Sans',sans-serif;letter-spacing:-.3px">EN</div>
<svg class="abs" style="left:878px;top:4px" width="17" height="17" viewBox="0 0 17 17"><circle cx="8.500" cy="8.500" r="7" fill="#c8c8c8" stroke="#222" stroke-width="1.300"/><circle cx="8.500" cy="8.500" r="3.500" fill="#888" stroke="#222" stroke-width="1"/><path d="M8.500 0v17M0 8.500h17" stroke="#222" stroke-width="1.300"/></svg>
<svg class="abs" style="left:896px;top:4px" width="17" height="17" viewBox="0 0 17 17"><rect x="5" y="3" width="9" height="9" fill="#e0e0e0" stroke="#555" stroke-width=".8"/><rect x="6.500" y="6" width="6" height="4.500" fill="#222"/><path d="M7 8l3-3" stroke="#fff" stroke-width="1"/><path d="M0.500 10.500l3.500 4L15 1" stroke="#e01818" stroke-width="1.700" fill="none"/></svg>
<svg class="abs" style="left:914px;top:9px" width="17" height="7" viewBox="0 0 17 7"><path d="M2 3.500h12" stroke="#222" stroke-width="1" stroke-dasharray="1 1"/><path d="M3 1L0.500 3.500 3 6M13.500 1L16 3.500 13.500 6" stroke="#222" stroke-width="1" fill="none"/></svg>
<svg class="abs" style="left:932px;top:4px" width="17" height="17" viewBox="0 0 17 17"><rect x="0.500" y="0.500" width="16" height="15.500" fill="#0c5c14" stroke="#000" stroke-width="1"/><path d="M1.500 9h3l1.500-3 2 6.500 2-9 1.500 5.500h4" stroke="#f0f020" stroke-width="1.600" fill="none"/></svg>
<svg class="abs" style="left:950px;top:4px" width="18" height="18" viewBox="0 0 18 18"><rect x="2" y="1" width="9" height="7" fill="#30b8c8" stroke="#333" stroke-width="1"/><path d="M1 10h11v2.500H1z" fill="#c8c8c8" stroke="#333" stroke-width=".9"/><path d="M6 12.500v2.500M2 15h8" stroke="#333" stroke-width="1"/><path d="M9.500 10.500l7 6M16.500 10.500l-7 6" stroke="#e01818" stroke-width="2"/></svg>

  <div class="abs ui" style="left:981px;top:7px" id="clock">14:59</div>
</div>
</body>
</html>
